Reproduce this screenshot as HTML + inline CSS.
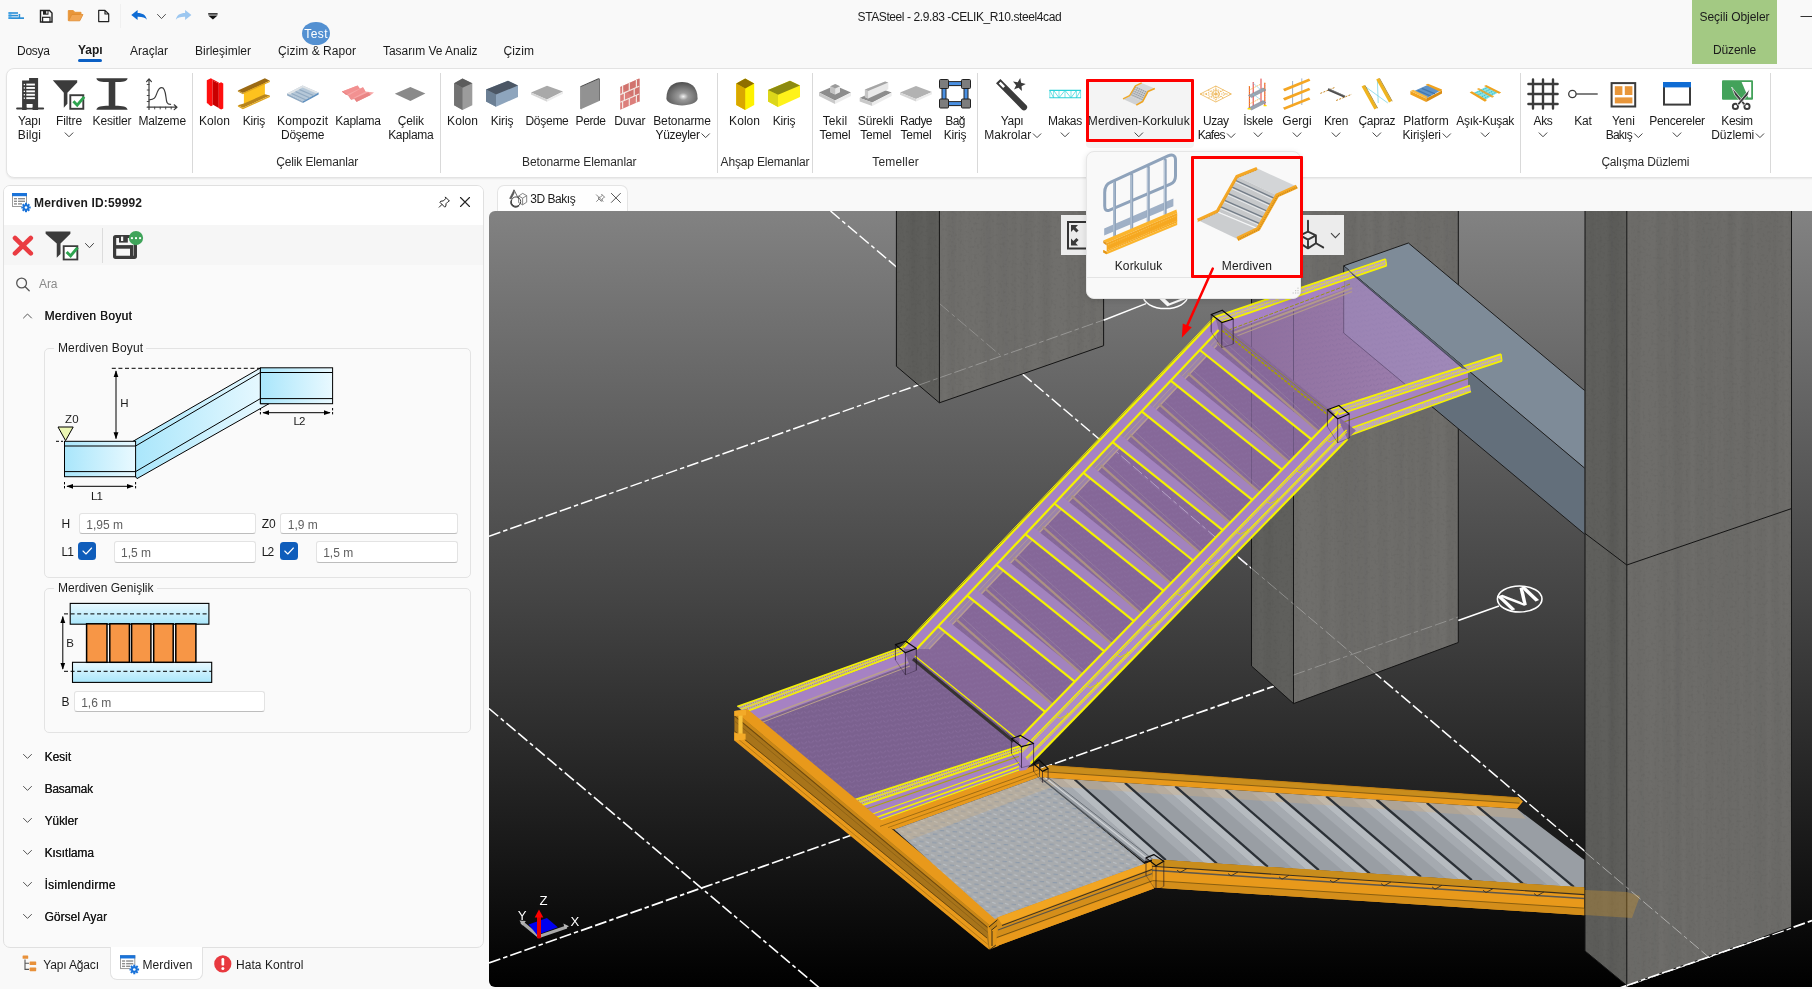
<!DOCTYPE html>
<html lang="tr"><head><meta charset="utf-8"><title>STASteel</title><style>html,body{margin:0;padding:0}body{width:1812px;height:989px;overflow:hidden;background:#f9f9f9;position:relative;font-family:"Liberation Sans",sans-serif;}
.t{position:absolute;white-space:nowrap;font-family:"Liberation Sans",sans-serif;}
#root{position:absolute;left:0;top:0;width:1812px;height:989px;will-change:transform;}
.b{position:absolute;display:block;}
svg{overflow:visible}</style></head><body><div id="root">
<div class="t" style="left:857.60px;top:11.10px;font-size:12px;line-height:12px;color:#1b1b1b;letter-spacing:-0.411px;">STASteel - 2.9.83 -CELIK_R10.steel4cad</div>
<div class="b" style="left:1692px;top:0px;width:85px;height:64px;background:#a3c983;"></div>
<div class="t" style="left:1699.53px;top:11.10px;font-size:12px;line-height:12px;color:#1b1b1b;letter-spacing:-0.053px;">Seçili Objeler</div>
<div class="t" style="left:1713.09px;top:44.10px;font-size:12px;line-height:12px;color:#1b1b1b;letter-spacing:-0.171px;">Düzenle</div>
<div class="t" style="left:17.00px;top:45.10px;font-size:12px;line-height:12px;color:#1b1b1b;letter-spacing:-0.253px;">Dosya</div>
<div class="t" style="left:78.00px;top:44.10px;font-size:12px;line-height:12px;color:#1b1b1b;font-weight:bold;letter-spacing:-0.060px;">Yapı</div>
<div class="t" style="left:130.00px;top:45.10px;font-size:12px;line-height:12px;color:#1b1b1b;letter-spacing:-0.001px;">Araçlar</div>
<div class="t" style="left:195.00px;top:45.10px;font-size:12px;line-height:12px;color:#1b1b1b;">Birleşimler</div>
<div class="t" style="left:278.00px;top:45.10px;font-size:12px;line-height:12px;color:#1b1b1b;letter-spacing:0.054px;">Çizim &amp; Rapor</div>
<div class="t" style="left:383.00px;top:45.10px;font-size:12px;line-height:12px;color:#1b1b1b;letter-spacing:-0.055px;">Tasarım Ve Analiz</div>
<div class="t" style="left:503.50px;top:45.10px;font-size:12px;line-height:12px;color:#1b1b1b;letter-spacing:0.126px;">Çizim</div>
<div class="b" style="left:78px;top:59px;width:24px;height:2.6px;background:#0a5fc4;border-radius:1.5px;"></div>
<div class="b" style="left:302px;top:21.6px;width:28.2px;height:23.5px;background:#5390d1;border-radius:50%;"></div>
<div class="t" style="left:304.23px;top:28.10px;font-size:12px;line-height:12px;color:#fff;letter-spacing:0.431px;">Test</div>
<div class="b" style="left:5.6px;top:67.8px;width:1830px;height:108.2px;background:#ffffff;border:1px solid #e3e3e3;border-radius:8px;box-shadow:0 1px 2px rgba(0,0,0,.07);"></div>
<div class="b" style="left:1086px;top:79px;width:108px;height:69px;background:#f4f4f4;border-radius:4px;"></div>
<div class="b" style="left:191.8px;top:72.5px;width:1px;height:100.5px;background:#d9d9d9;"></div>
<div class="b" style="left:440.1px;top:72.5px;width:1px;height:100.5px;background:#d9d9d9;"></div>
<div class="b" style="left:716.9px;top:72.5px;width:1px;height:100.5px;background:#d9d9d9;"></div>
<div class="b" style="left:811.9px;top:72.5px;width:1px;height:100.5px;background:#d9d9d9;"></div>
<div class="b" style="left:977.1px;top:72.5px;width:1px;height:100.5px;background:#d9d9d9;"></div>
<div class="b" style="left:1520.1px;top:72.5px;width:1px;height:100.5px;background:#d9d9d9;"></div>
<div class="b" style="left:1770.2px;top:72.5px;width:1px;height:100.5px;background:#d9d9d9;"></div>
<div class="t" style="left:18.03px;top:115.10px;font-size:12px;line-height:12px;color:#1b1b1b;letter-spacing:-0.265px;">Yapı</div>
<div class="t" style="left:17.86px;top:129.10px;font-size:12px;line-height:12px;color:#1b1b1b;letter-spacing:0.081px;">Bilgi</div>
<div class="t" style="left:55.89px;top:115.10px;font-size:12px;line-height:12px;color:#1b1b1b;letter-spacing:-0.073px;">Filtre</div>
<div class="t" style="left:92.57px;top:115.10px;font-size:12px;line-height:12px;color:#1b1b1b;letter-spacing:-0.145px;">Kesitler</div>
<div class="t" style="left:138.43px;top:115.10px;font-size:12px;line-height:12px;color:#1b1b1b;letter-spacing:-0.163px;">Malzeme</div>
<div class="t" style="left:198.96px;top:115.10px;font-size:12px;line-height:12px;color:#1b1b1b;letter-spacing:0.077px;">Kolon</div>
<div class="t" style="left:242.69px;top:115.10px;font-size:12px;line-height:12px;color:#1b1b1b;letter-spacing:-0.183px;">Kiriş</div>
<div class="t" style="left:277.03px;top:115.10px;font-size:12px;line-height:12px;color:#1b1b1b;letter-spacing:0.140px;">Kompozit</div>
<div class="t" style="left:280.97px;top:129.10px;font-size:12px;line-height:12px;color:#1b1b1b;letter-spacing:-0.236px;">Döşeme</div>
<div class="t" style="left:335.35px;top:115.10px;font-size:12px;line-height:12px;color:#1b1b1b;letter-spacing:-0.293px;">Kaplama</div>
<div class="t" style="left:397.63px;top:115.10px;font-size:12px;line-height:12px;color:#1b1b1b;letter-spacing:-0.068px;">Çelik</div>
<div class="t" style="left:388.15px;top:129.10px;font-size:12px;line-height:12px;color:#1b1b1b;letter-spacing:-0.293px;">Kaplama</div>
<div class="t" style="left:447.06px;top:115.10px;font-size:12px;line-height:12px;color:#1b1b1b;letter-spacing:0.077px;">Kolon</div>
<div class="t" style="left:490.79px;top:115.10px;font-size:12px;line-height:12px;color:#1b1b1b;letter-spacing:-0.183px;">Kiriş</div>
<div class="t" style="left:525.49px;top:115.10px;font-size:12px;line-height:12px;color:#1b1b1b;letter-spacing:-0.276px;">Döşeme</div>
<div class="t" style="left:575.60px;top:115.10px;font-size:12px;line-height:12px;color:#1b1b1b;letter-spacing:-0.405px;">Perde</div>
<div class="t" style="left:614.30px;top:115.10px;font-size:12px;line-height:12px;color:#1b1b1b;letter-spacing:-0.202px;">Duvar</div>
<div class="t" style="left:653.21px;top:115.10px;font-size:12px;line-height:12px;color:#1b1b1b;letter-spacing:-0.124px;">Betonarme</div>
<div class="t" style="left:655.55px;top:129.10px;font-size:12px;line-height:12px;color:#1b1b1b;letter-spacing:-0.327px;">Yüzeyler</div>
<div class="t" style="left:729.06px;top:115.10px;font-size:12px;line-height:12px;color:#1b1b1b;letter-spacing:0.077px;">Kolon</div>
<div class="t" style="left:772.79px;top:115.10px;font-size:12px;line-height:12px;color:#1b1b1b;letter-spacing:-0.183px;">Kiriş</div>
<div class="t" style="left:822.69px;top:115.10px;font-size:12px;line-height:12px;color:#1b1b1b;letter-spacing:0.124px;">Tekil</div>
<div class="t" style="left:819.44px;top:129.10px;font-size:12px;line-height:12px;color:#1b1b1b;letter-spacing:-0.177px;">Temel</div>
<div class="t" style="left:857.76px;top:115.10px;font-size:12px;line-height:12px;color:#1b1b1b;letter-spacing:-0.113px;">Sürekli</div>
<div class="t" style="left:860.14px;top:129.10px;font-size:12px;line-height:12px;color:#1b1b1b;letter-spacing:-0.177px;">Temel</div>
<div class="t" style="left:900.02px;top:115.10px;font-size:12px;line-height:12px;color:#1b1b1b;letter-spacing:-0.546px;">Radye</div>
<div class="t" style="left:900.44px;top:129.10px;font-size:12px;line-height:12px;color:#1b1b1b;letter-spacing:-0.177px;">Temel</div>
<div class="t" style="left:945.34px;top:115.10px;font-size:12px;line-height:12px;color:#1b1b1b;letter-spacing:-0.675px;">Bağ</div>
<div class="t" style="left:943.79px;top:129.10px;font-size:12px;line-height:12px;color:#1b1b1b;letter-spacing:-0.183px;">Kiriş</div>
<div class="t" style="left:1000.63px;top:115.10px;font-size:12px;line-height:12px;color:#1b1b1b;letter-spacing:-0.265px;">Yapı</div>
<div class="t" style="left:984.15px;top:129.10px;font-size:12px;line-height:12px;color:#1b1b1b;letter-spacing:0.075px;">Makrolar</div>
<div class="t" style="left:1048.04px;top:115.10px;font-size:12px;line-height:12px;color:#1b1b1b;letter-spacing:-0.285px;">Makas</div>
<div class="t" style="left:1087.84px;top:115.10px;font-size:12px;line-height:12px;color:#1b1b1b;letter-spacing:0.111px;">Merdiven-Korkuluk</div>
<div class="t" style="left:1203.02px;top:115.10px;font-size:12px;line-height:12px;color:#1b1b1b;letter-spacing:-0.446px;">Uzay</div>
<div class="t" style="left:1197.70px;top:129.10px;font-size:12px;line-height:12px;color:#1b1b1b;letter-spacing:-0.746px;">Kafes</div>
<div class="t" style="left:1243.25px;top:115.10px;font-size:12px;line-height:12px;color:#1b1b1b;letter-spacing:-0.309px;">İskele</div>
<div class="t" style="left:1282.36px;top:115.10px;font-size:12px;line-height:12px;color:#1b1b1b;letter-spacing:-0.010px;">Gergi</div>
<div class="t" style="left:1323.89px;top:115.10px;font-size:12px;line-height:12px;color:#1b1b1b;letter-spacing:-0.282px;">Kren</div>
<div class="t" style="left:1358.47px;top:115.10px;font-size:12px;line-height:12px;color:#1b1b1b;letter-spacing:-0.336px;">Çapraz</div>
<div class="t" style="left:1403.19px;top:115.10px;font-size:12px;line-height:12px;color:#1b1b1b;letter-spacing:0.118px;">Platform</div>
<div class="t" style="left:1402.45px;top:129.10px;font-size:12px;line-height:12px;color:#1b1b1b;letter-spacing:-0.092px;">Kirişleri</div>
<div class="t" style="left:1456.35px;top:115.10px;font-size:12px;line-height:12px;color:#1b1b1b;letter-spacing:-0.298px;">Aşık-Kuşak</div>
<div class="t" style="left:1533.38px;top:115.10px;font-size:12px;line-height:12px;color:#1b1b1b;letter-spacing:-0.252px;">Aks</div>
<div class="t" style="left:1574.15px;top:115.10px;font-size:12px;line-height:12px;color:#1b1b1b;letter-spacing:-0.106px;">Kat</div>
<div class="t" style="left:1611.89px;top:115.10px;font-size:12px;line-height:12px;color:#1b1b1b;letter-spacing:0.028px;">Yeni</div>
<div class="t" style="left:1605.65px;top:129.10px;font-size:12px;line-height:12px;color:#1b1b1b;letter-spacing:-0.753px;">Bakış</div>
<div class="t" style="left:1649.17px;top:115.10px;font-size:12px;line-height:12px;color:#1b1b1b;letter-spacing:-0.236px;">Pencereler</div>
<div class="t" style="left:1721.35px;top:115.10px;font-size:12px;line-height:12px;color:#1b1b1b;letter-spacing:-0.410px;">Kesim</div>
<div class="t" style="left:1711.25px;top:129.10px;font-size:12px;line-height:12px;color:#1b1b1b;letter-spacing:-0.057px;">Düzlemi</div>
<div class="t" style="left:276.27px;top:156.10px;font-size:12px;line-height:12px;color:#2b2b2b;letter-spacing:-0.145px;">Çelik Elemanlar</div>
<div class="t" style="left:522.09px;top:156.10px;font-size:12px;line-height:12px;color:#2b2b2b;letter-spacing:-0.086px;">Betonarme Elemanlar</div>
<div class="t" style="left:720.58px;top:156.10px;font-size:12px;line-height:12px;color:#2b2b2b;letter-spacing:-0.170px;">Ahşap Elemanlar</div>
<div class="t" style="left:872.27px;top:156.10px;font-size:12px;line-height:12px;color:#2b2b2b;letter-spacing:0.165px;">Temeller</div>
<div class="t" style="left:1601.40px;top:156.10px;font-size:12px;line-height:12px;color:#2b2b2b;letter-spacing:-0.192px;">Çalışma Düzlemi</div>
<div class="b" style="left:3px;top:185px;width:481px;height:763px;background:#fafafa;border:1px solid #e0e0e0;border-radius:7px;box-sizing:border-box;overflow:hidden;"></div>
<div class="b" style="left:4px;top:186px;width:479px;height:39px;background:#ffffff;border-radius:6px 6px 0 0;"></div>
<div class="b" style="left:4px;top:225px;width:479px;height:40px;background:#f6f6f6;"></div>
<div class="t" style="left:34.00px;top:197.10px;font-size:12px;line-height:12px;color:#1b1b1b;font-weight:bold;letter-spacing:0.164px;">Merdiven ID:59992</div>
<div class="b" style="left:102px;top:228px;width:1px;height:35px;background:#dcdcdc;"></div>
<div class="t" style="left:39.00px;top:278.10px;font-size:12px;line-height:12px;color:#8a8a8a;letter-spacing:-0.087px;">Ara</div>
<div class="t" style="left:44.40px;top:310.10px;font-size:12px;line-height:12px;color:#1b1b1b;letter-spacing:0.318px;text-shadow:0.25px 0 0 #1b1b1b;">Merdiven Boyut</div>
<div class="t" style="left:44.40px;top:751.10px;font-size:12px;line-height:12px;color:#1b1b1b;letter-spacing:-0.019px;text-shadow:0.25px 0 0 #1b1b1b;">Kesit</div>
<div class="t" style="left:44.40px;top:783.10px;font-size:12px;line-height:12px;color:#1b1b1b;letter-spacing:-0.237px;text-shadow:0.25px 0 0 #1b1b1b;">Basamak</div>
<div class="t" style="left:44.40px;top:815.10px;font-size:12px;line-height:12px;color:#1b1b1b;letter-spacing:-0.083px;text-shadow:0.25px 0 0 #1b1b1b;">Yükler</div>
<div class="t" style="left:44.40px;top:847.10px;font-size:12px;line-height:12px;color:#1b1b1b;letter-spacing:-0.052px;text-shadow:0.25px 0 0 #1b1b1b;">Kısıtlama</div>
<div class="t" style="left:44.40px;top:879.10px;font-size:12px;line-height:12px;color:#1b1b1b;letter-spacing:0.272px;text-shadow:0.25px 0 0 #1b1b1b;">İsimlendirme</div>
<div class="t" style="left:44.40px;top:911.10px;font-size:12px;line-height:12px;color:#1b1b1b;letter-spacing:0.013px;text-shadow:0.25px 0 0 #1b1b1b;">Görsel Ayar</div>
<div class="b" style="left:44px;top:347.5px;width:427px;height:230px;border:1px solid #e3e3e3;border-radius:5px;box-sizing:border-box;"></div>
<div class="b" style="left:54px;top:341px;width:92px;height:13px;background:#fafafa;"></div>
<div class="t" style="left:58.00px;top:342.10px;font-size:12px;line-height:12px;color:#1b1b1b;letter-spacing:0.126px;">Merdiven Boyut</div>
<div class="b" style="left:44px;top:587.5px;width:427px;height:145px;border:1px solid #e3e3e3;border-radius:5px;box-sizing:border-box;"></div>
<div class="b" style="left:54px;top:581px;width:103px;height:13px;background:#fafafa;"></div>
<div class="t" style="left:58.00px;top:582.10px;font-size:12px;line-height:12px;color:#1b1b1b;letter-spacing:0.009px;">Merdiven Genişlik</div>
<div class="t" style="left:61.40px;top:518.10px;font-size:12px;line-height:12px;color:#1b1b1b;">H</div>
<div class="b" style="left:78.7px;top:512.7px;width:177.7px;height:21.8px;background:#fff;border:1px solid #e3e3e3;border-bottom-color:#bdbdbd;border-radius:3px;box-sizing:border-box;"></div><div class="t" style="left:86.30px;top:519.10px;font-size:12px;line-height:12px;color:#5f5f5f;">1,95 m</div>
<div class="t" style="left:261.80px;top:518.10px;font-size:12px;line-height:12px;color:#1b1b1b;letter-spacing:-0.002px;">Z0</div>
<div class="b" style="left:280.2px;top:512.7px;width:178.3px;height:21.8px;background:#fff;border:1px solid #e3e3e3;border-bottom-color:#bdbdbd;border-radius:3px;box-sizing:border-box;"></div><div class="t" style="left:287.80px;top:519.10px;font-size:12px;line-height:12px;color:#5f5f5f;">1,9 m</div>
<div class="t" style="left:61.40px;top:546.10px;font-size:12px;line-height:12px;color:#1b1b1b;letter-spacing:-0.846px;">L1</div>
<div class="b" style="left:113.5px;top:541px;width:142.9px;height:21.6px;background:#fff;border:1px solid #e3e3e3;border-bottom-color:#bdbdbd;border-radius:3px;box-sizing:border-box;"></div><div class="t" style="left:121.10px;top:547.10px;font-size:12px;line-height:12px;color:#5f5f5f;">1,5 m</div>
<div class="t" style="left:261.80px;top:546.10px;font-size:12px;line-height:12px;color:#1b1b1b;letter-spacing:-0.846px;">L2</div>
<div class="b" style="left:315.6px;top:541px;width:142.9px;height:21.6px;background:#fff;border:1px solid #e3e3e3;border-bottom-color:#bdbdbd;border-radius:3px;box-sizing:border-box;"></div><div class="t" style="left:323.20px;top:547.10px;font-size:12px;line-height:12px;color:#5f5f5f;">1,5 m</div>
<div class="b" style="left:78.4px;top:542px;width:17.6px;height:17.6px;background:#0f5dbb;border-radius:3.5px;"></div>
<div class="b" style="left:280.2px;top:542px;width:17.6px;height:17.6px;background:#0f5dbb;border-radius:3.5px;"></div>
<div class="t" style="left:61.40px;top:696.10px;font-size:12px;line-height:12px;color:#1b1b1b;">B</div>
<div class="b" style="left:73.6px;top:690.9px;width:191.9px;height:21.5px;background:#fff;border:1px solid #e3e3e3;border-bottom-color:#bdbdbd;border-radius:3px;box-sizing:border-box;"></div><div class="t" style="left:81.20px;top:697.10px;font-size:12px;line-height:12px;color:#5f5f5f;">1,6 m</div>
<div class="t" style="left:120.30px;top:397.51px;font-size:11.5px;line-height:11.5px;color:#1b1b1b;">H</div>
<div class="t" style="left:65.00px;top:413.51px;font-size:11.5px;line-height:11.5px;color:#1b1b1b;letter-spacing:0.181px;">Z0</div>
<div class="t" style="left:91.00px;top:491.01px;font-size:11.5px;line-height:11.5px;color:#1b1b1b;letter-spacing:-0.790px;">L1</div>
<div class="t" style="left:293.50px;top:415.51px;font-size:11.5px;line-height:11.5px;color:#1b1b1b;letter-spacing:-0.790px;">L2</div>
<div class="t" style="left:66.20px;top:637.51px;font-size:11.5px;line-height:11.5px;color:#1b1b1b;">B</div>
<div class="b" style="left:109.5px;top:947px;width:93px;height:32.5px;background:#fff;border:1px solid #e2e2e2;border-top:none;border-radius:0 0 7px 7px;box-sizing:border-box;"></div>
<div class="t" style="left:43.30px;top:959.10px;font-size:12px;line-height:12px;color:#1b1b1b;letter-spacing:-0.161px;">Yapı Ağacı</div>
<div class="t" style="left:142.50px;top:959.10px;font-size:12px;line-height:12px;color:#1b1b1b;letter-spacing:0.093px;">Merdiven</div>
<div class="t" style="left:236.00px;top:959.10px;font-size:12px;line-height:12px;color:#1b1b1b;letter-spacing:0.055px;">Hata Kontrol</div>
<div class="b" style="left:496.8px;top:184.8px;width:131px;height:28px;background:#fefefe;border:1px solid #e4e4e4;border-bottom:none;border-radius:7px 7px 0 0;box-sizing:border-box;"></div>
<div class="t" style="left:530.30px;top:193.10px;font-size:12px;line-height:12px;color:#1b1b1b;letter-spacing:-0.469px;">3D Bakış</div>
<svg class="b" style="left:489px;top:211px" width="1323" height="778" viewBox="489 211 1323 778"><defs>
    <linearGradient id="bgg" x1="0" x2="0" y1="0" y2="1"><stop offset="0" stop-color="#828282"/><stop offset="0.5" stop-color="#444444"/><stop offset="1" stop-color="#000000"/></linearGradient>
    <filter id="conc" x="0" y="0" width="100%" height="100%"><feTurbulence type="fractalNoise" baseFrequency="0.11 0.0012" numOctaves="2" seed="7" result="n"/><feColorMatrix in="n" type="matrix" values="0 0 0 0 0  0 0 0 0 0  0 0 0 0 0  1.1 0.6 0 0 -0.62" result="a"/><feComposite in="a" in2="SourceAlpha" operator="in"/></filter>
    <filter id="conc2" x="0" y="0" width="100%" height="100%"><feTurbulence type="fractalNoise" baseFrequency="0.35 0.35" numOctaves="2" seed="3" result="n"/><feColorMatrix in="n" type="matrix" values="0 0 0 0 0  0 0 0 0 0  0 0 0 0 0  1.2 0 0 0 -0.62" result="a"/><feComposite in="a" in2="SourceAlpha" operator="in"/></filter>
    <pattern id="plate" width="13" height="8.4" patternUnits="userSpaceOnUse" patternTransform="rotate(5)"><path d="M1 2 h4.6 M7.5 6.2 h4.6" stroke="#8f9cab" stroke-width="1.1" fill="none"/><path d="M7.5 1.6 l3.6 1.2 M1 5.8 l3.6 1.2" stroke="#bcc1c6" stroke-width="1" fill="none"/></pattern>
    <pattern id="platep" width="7" height="5" patternUnits="userSpaceOnUse" patternTransform="rotate(-8)"><path d="M0.5 3.4 L3 1.6 M4 1.4 L6.5 3.6" stroke="#8a6f9f" stroke-width=".8" fill="none"/></pattern>
    <pattern id="hatch" width="2.4" height="2.4" patternUnits="userSpaceOnUse"><rect width="2.4" height="2.4" fill="#b9a0cf"/><rect x="0" y="0" width="1.2" height="1.2" fill="#d9d24a"/></pattern><clipPath id="vclip"><path d="M495 211 H1812 V987 H495 a6 6 0 0 1 -6 -6 V217 a6 6 0 0 1 6 -6z"/></clipPath>
    </defs><g clip-path="url(#vclip)"><rect x="489" y="211" width="1323" height="776" fill="url(#bgg)"/><line x1="489.0" y1="536.2" x2="925.0" y2="382.6" stroke="#ffffff" stroke-width="1.5" stroke-dasharray="12 3 4.5 3 12 3"/><line x1="489.0" y1="963.0" x2="1300.0" y2="677.0" stroke="#ffffff" stroke-width="1.7" stroke-dasharray="12 3 4.5 3 12 3"/><line x1="1560.0" y1="1009.0" x2="1812.0" y2="920.6" stroke="#ffffff" stroke-width="1.8" stroke-dasharray="12 3 4.5 3 12 3"/><line x1="830.5" y1="211.0" x2="1710.0" y2="957.5" stroke="#ffffff" stroke-width="1.5" stroke-dasharray="12 3.4 4 3.4 12 3.4"/><line x1="489.0" y1="708.5" x2="822.0" y2="990.0" stroke="#ffffff" stroke-width="1.6" stroke-dasharray="12 3.4 4 3.4 12 3.4"/><polygon points="896.4,205.0 939.4,205.0 939.4,402.8 896.4,366.3" fill="#5f5f5c" /><polygon points="939.4,205.0 1103.6,205.0 1103.6,345.7 939.4,402.8" fill="#706f6c" /><polygon points="896.4,205.0 939.4,205.0 939.4,402.8 896.4,366.3" fill="#000" opacity="0.085" filter="url(#conc)"/><polygon points="939.4,205.0 1103.6,205.0 1103.6,345.7 939.4,402.8" fill="#000" opacity="0.08" filter="url(#conc)"/><polygon points="896.4,205.0 1103.6,205.0 1103.6,345.7 939.4,402.8 896.4,366.3" fill="#000" opacity="0.1" filter="url(#conc2)"/><path d="M896.4 205 V366.3 L939.4 402.8 L1103.6 345.7 V205 M939.4 205 V402.8" fill="none" stroke="#141414" stroke-width="1"/><line x1="919.0" y1="385.0" x2="1103.6" y2="320.0" stroke="#ffffff" stroke-width="1" stroke-dasharray="12 3 4.5 3 12 3" opacity="0.28"/><line x1="830.5" y1="211.0" x2="1099.0" y2="439.0" stroke="#ffffff" stroke-width="1" stroke-dasharray="12 3.4 4 3.4 12 3.4" opacity="0.0"/><line x1="940.0" y1="304.0" x2="1000.0" y2="355.0" stroke="#ffffff" stroke-width="1" stroke-dasharray="12 3.4 4 3.4 12 3.4" opacity="0.22"/><line x1="1103.6" y1="320.2" x2="1146.0" y2="303.6" stroke="#ffffff" stroke-width="1.5"/><ellipse cx="1165.4" cy="295.6" rx="22.4" ry="13" fill="none" stroke="#fff" stroke-width="1.5"/><text x="0" y="0" transform="matrix(2.03,-0.778,1.06,1.0,1164.1,307.4)" font-family="Liberation Sans, sans-serif" font-size="20" fill="#fff">L</text><polygon points="1251.5,205.0 1293.5,205.0 1293.5,703.6 1251.5,666.0" fill="#5f5f5c" /><polygon points="1293.5,205.0 1458.3,205.0 1458.3,642.5 1293.5,703.6" fill="#6f6e6b" /><polygon points="1251.5,205.0 1293.5,205.0 1293.5,703.6 1251.5,666.0" fill="#000" opacity="0.085" filter="url(#conc)"/><polygon points="1293.5,205.0 1458.3,205.0 1458.3,642.5 1293.5,703.6" fill="#000" opacity="0.08" filter="url(#conc)"/><polygon points="1251.5,205.0 1458.3,205.0 1458.3,642.5 1293.5,703.6 1251.5,666.0" fill="#000" opacity="0.1" filter="url(#conc2)"/><path d="M1251.5 205 V666 L1293.5 703.6 L1458.3 642.5 V205 M1293.5 205 V703.6" fill="none" stroke="#141414" stroke-width="1"/><line x1="1293.5" y1="675.0" x2="1458.3" y2="617.0" stroke="#ffffff" stroke-width="1" stroke-dasharray="12 3 4.5 3 12 3" opacity="0.25"/><line x1="1250.0" y1="567.0" x2="1376.0" y2="674.0" stroke="#ffffff" stroke-width="1" stroke-dasharray="12 3.4 4 3.4 12 3.4" opacity="0.3"/><line x1="1458.3" y1="620.6" x2="1499.0" y2="606.0" stroke="#ffffff" stroke-width="1.6"/><ellipse cx="1519.7" cy="599" rx="22.3" ry="13" fill="none" stroke="#fff" stroke-width="1.6"/><text x="0" y="0" transform="matrix(2.03,-0.778,1.06,1.0,1508.4,611.8)" font-family="Liberation Sans, sans-serif" font-size="20" fill="#fff">M</text><polygon points="1343.7,265.8 1408.4,243.0 1584.5,390.4 1584.5,468.0" fill="#7e8b98" /><polygon points="1343.7,265.8 1584.5,468.0 1584.5,534.0 1458.6,429.0 1343.7,333.0" fill="#636f7b" /><path d="M1343.7 265.8 L1408.4 243 L1584.5 390.4 M1343.7 265.8 L1584.5 468 M1343.7 333 L1584.5 534 M1343.7 265.8 V333" fill="none" stroke="#1c1c1c" stroke-width="1"/><linearGradient id="lpg" gradientUnits="userSpaceOnUse" x1="1240" y1="0" x2="1465" y2="0"><stop offset="0" stop-color="#8f6f9f"/><stop offset="1" stop-color="#a283b4"/></linearGradient><polygon points="1215.5,318.0 1351.8,273.9 1462.5,368.2 1347.0,424.5" fill="url(#lpg)" opacity="0.97" /><polygon points="1215.5,318.0 1351.8,273.9 1462.5,368.2 1347.0,424.5" fill="url(#platep)" /><clipPath id="ulclip"><polygon points="1215.5,318.0 1351.8,273.9 1462.5,368.2 1347.0,424.5"/></clipPath><g clip-path="url(#ulclip)"><polygon points="1343.7,265.8 1470.0,372.0 1470.0,438.6 1458.6,429.0 1343.7,333.0" fill="#a08fc0" opacity="0.5" /><path d="M1343.7 274 V333 L1458.6 429" fill="none" stroke="#4a3d5e" stroke-width="1" opacity=".55"/></g><line x1="1293.5" y1="300.0" x2="1293.5" y2="392.0" stroke="#5b4a70" stroke-width="1" opacity="0.7"/><line x1="1251.5" y1="306.0" x2="1251.5" y2="352.0" stroke="#5b4a70" stroke-width="1" opacity="0.5"/><polygon points="1217.0,324.2 1344.0,280.6 1344.0,289.6 1221.0,334.2" fill="#a682c3" /><polygon points="1213.0,317.6 1385.6,259.0 1386.6,265.6 1216.0,324.2" fill="url(#hatch)" /><line x1="1213.0" y1="317.6" x2="1385.6" y2="259.0" stroke="#f4f200" stroke-width="1.8"/><line x1="1216.0" y1="324.2" x2="1386.6" y2="265.6" stroke="#f4f200" stroke-width="1.8"/><line x1="1214.5" y1="320.9" x2="1386.1" y2="262.3" stroke="#f4f200" stroke-width="0.8" opacity="0.8"/><line x1="1385.6" y1="259.0" x2="1386.6" y2="265.6" stroke="#f4f200" stroke-width="1.2"/><line x1="1223.0" y1="332.2" x2="1350.0" y2="284.1" stroke="#9a9410" stroke-width="1" stroke-dasharray="4 1.5"/><line x1="1225.0" y1="336.2" x2="1352.0" y2="288.1" stroke="#b39a8a" stroke-width="2"/><line x1="1227.0" y1="339.7" x2="1352.0" y2="291.6" stroke="#b39a8a" stroke-width="1.2"/><polygon points="1335.0,416.0 1468.0,371.4 1468.0,391.0 1343.0,437.0" fill="#a682c3" /><polygon points="1331.0,409.4 1501.0,354.2 1502.0,360.8 1334.0,416.0" fill="url(#hatch)" /><line x1="1331.0" y1="409.4" x2="1501.0" y2="354.2" stroke="#f4f200" stroke-width="1.8"/><line x1="1334.0" y1="416.0" x2="1502.0" y2="360.8" stroke="#f4f200" stroke-width="1.8"/><line x1="1332.5" y1="412.7" x2="1501.5" y2="357.5" stroke="#f4f200" stroke-width="0.8" opacity="0.8"/><line x1="1501.0" y1="354.2" x2="1502.0" y2="360.8" stroke="#f4f200" stroke-width="1.2"/><line x1="1341.0" y1="423.0" x2="1468.0" y2="378.4" stroke="#9a9410" stroke-width="1.2"/><polygon points="1343.0,431.0 1470.0,385.4 1471.0,391.4 1345.0,437.0" fill="url(#hatch)" /><line x1="1343.0" y1="431.0" x2="1470.0" y2="385.4" stroke="#f4f200" stroke-width="1.6"/><line x1="1345.0" y1="437.0" x2="1471.0" y2="391.4" stroke="#f4f200" stroke-width="1.6"/><polygon points="1343.7,265.8 1351.8,273.9 1462.5,368.2 1468.0,370.0" fill="#59636e" /><line x1="1351.8" y1="273.9" x2="1462.5" y2="368.2" stroke="#3c3050" stroke-width="1" opacity="0.6"/><polygon points="1215.5,318.0 1355.9,430.4 1036.9,756.9 902.0,649.0" fill="#87689b" opacity="0.97" /><polygon points="1215.5,318.0 1355.9,430.4 1036.9,756.9 902.0,649.0" fill="url(#platep)" /><line x1="1293.5" y1="392.0" x2="1293.5" y2="455.0" stroke="#5b4a70" stroke-width="1" opacity="0.55"/><line x1="1251.5" y1="352.0" x2="1251.5" y2="500.0" stroke="#5b4a70" stroke-width="1" opacity="0.45"/><line x1="1104.0" y1="441.0" x2="1250.0" y2="567.0" stroke="#e0d8ee" stroke-width="1" stroke-dasharray="12 3.4 4 3.4 12 3.4" opacity="0.5"/><polygon points="1216.8,332.0 1217.0,345.0 929.1,649.0 916.6,649.0" fill="#9d86ad" opacity="0.9" /><line x1="1217.0" y1="345.0" x2="929.1" y2="649.0" stroke="#b89c92" stroke-width="1.4"/><line x1="1216.3" y1="340.0" x2="923.6" y2="649.0" stroke="#b89c92" stroke-width="1" opacity="0.8"/><polygon points="1199.8,350.0 1311.5,439.3 1318.8,431.8 1207.0,342.4" fill="#a283be" /><line x1="1217.0" y1="342.4" x2="1318.8" y2="431.8" stroke="#ab9184" stroke-width="2.2"/><line x1="1222.1" y1="339.6" x2="1321.5" y2="429.1" stroke="#a08ca4" stroke-width="1" opacity="0.5"/><line x1="1199.8" y1="350.0" x2="1311.5" y2="439.3" stroke="#f4f200" stroke-width="2.2"/><polygon points="1170.7,380.7 1281.9,469.6 1289.2,462.1 1177.9,373.1" fill="#a283be" /><line x1="1187.9" y1="373.1" x2="1289.2" y2="462.1" stroke="#ab9184" stroke-width="2.2"/><line x1="1193.1" y1="370.3" x2="1291.9" y2="459.4" stroke="#a08ca4" stroke-width="1" opacity="0.5"/><line x1="1170.7" y1="380.7" x2="1281.9" y2="469.6" stroke="#f4f200" stroke-width="2.2"/><polygon points="1141.6,411.4 1252.3,499.9 1259.6,492.4 1148.8,403.8" fill="#a283be" /><line x1="1158.8" y1="403.8" x2="1259.6" y2="492.4" stroke="#ab9184" stroke-width="2.2"/><line x1="1164.0" y1="401.0" x2="1262.3" y2="489.7" stroke="#a08ca4" stroke-width="1" opacity="0.5"/><line x1="1141.6" y1="411.4" x2="1252.3" y2="499.9" stroke="#f4f200" stroke-width="2.2"/><polygon points="1112.6,442.1 1222.7,530.2 1230.0,522.7 1119.8,434.5" fill="#a283be" /><line x1="1129.8" y1="434.5" x2="1230.0" y2="522.7" stroke="#ab9184" stroke-width="2.2"/><line x1="1134.9" y1="431.7" x2="1232.7" y2="519.9" stroke="#a08ca4" stroke-width="1" opacity="0.5"/><line x1="1112.6" y1="442.1" x2="1222.7" y2="530.2" stroke="#f4f200" stroke-width="2.2"/><polygon points="1083.5,472.8 1193.1,560.5 1200.4,553.0 1090.7,465.2" fill="#a283be" /><line x1="1100.7" y1="465.2" x2="1200.4" y2="553.0" stroke="#ab9184" stroke-width="2.2"/><line x1="1105.8" y1="462.4" x2="1203.1" y2="550.2" stroke="#a08ca4" stroke-width="1" opacity="0.5"/><line x1="1083.5" y1="472.8" x2="1193.1" y2="560.5" stroke="#f4f200" stroke-width="2.2"/><polygon points="1054.4,503.5 1163.5,590.8 1170.8,583.3 1061.6,495.9" fill="#a283be" /><line x1="1071.6" y1="495.9" x2="1170.8" y2="583.3" stroke="#ab9184" stroke-width="2.2"/><line x1="1076.8" y1="493.1" x2="1173.5" y2="580.5" stroke="#a08ca4" stroke-width="1" opacity="0.5"/><line x1="1054.4" y1="503.5" x2="1163.5" y2="590.8" stroke="#f4f200" stroke-width="2.2"/><polygon points="1025.3,534.2 1133.9,621.1 1141.2,613.6 1032.5,526.6" fill="#a283be" /><line x1="1042.5" y1="526.6" x2="1141.2" y2="613.6" stroke="#ab9184" stroke-width="2.2"/><line x1="1047.7" y1="523.8" x2="1143.9" y2="610.8" stroke="#a08ca4" stroke-width="1" opacity="0.5"/><line x1="1025.3" y1="534.2" x2="1133.9" y2="621.1" stroke="#f4f200" stroke-width="2.2"/><polygon points="996.3,564.9 1104.3,651.4 1111.7,643.9 1003.5,557.3" fill="#a283be" /><line x1="1013.5" y1="557.3" x2="1111.7" y2="643.9" stroke="#ab9184" stroke-width="2.2"/><line x1="1018.6" y1="554.5" x2="1114.4" y2="641.1" stroke="#a08ca4" stroke-width="1" opacity="0.5"/><line x1="996.3" y1="564.9" x2="1104.3" y2="651.4" stroke="#f4f200" stroke-width="2.2"/><polygon points="967.2,595.6 1074.7,681.6 1082.1,674.1 974.4,588.0" fill="#a283be" /><line x1="984.4" y1="588.0" x2="1082.1" y2="674.1" stroke="#ab9184" stroke-width="2.2"/><line x1="989.5" y1="585.2" x2="1084.8" y2="671.4" stroke="#a08ca4" stroke-width="1" opacity="0.5"/><line x1="967.2" y1="595.6" x2="1074.7" y2="681.6" stroke="#f4f200" stroke-width="2.2"/><polygon points="938.1,626.3 1045.1,711.9 1052.5,704.4 945.3,618.7" fill="#a283be" /><line x1="955.3" y1="618.7" x2="1052.5" y2="704.4" stroke="#ab9184" stroke-width="2.2"/><line x1="960.5" y1="615.9" x2="1055.2" y2="701.7" stroke="#a08ca4" stroke-width="1" opacity="0.5"/><line x1="938.1" y1="626.3" x2="1045.1" y2="711.9" stroke="#f4f200" stroke-width="2.2"/><line x1="1222.0" y1="330.6" x2="1328.0" y2="415.0" stroke="#a8a000" stroke-width="1.6" stroke-dasharray="3 1.2"/><line x1="1224.0" y1="328.6" x2="1330.0" y2="412.6" stroke="#8e8a20" stroke-width="1" opacity="0.8"/><polygon points="1215.5,318.0 1218.7,330.0 916.6,649.0 902.0,649.0" fill="#a682c3" /><line x1="1215.5" y1="318.0" x2="902.0" y2="649.0" stroke="#f4f200" stroke-width="2.2"/><line x1="1213.1" y1="318.0" x2="899.6" y2="649.0" stroke="#f4f200" stroke-width="0.9"/><line x1="1218.7" y1="330.0" x2="916.6" y2="649.0" stroke="#f4f200" stroke-width="2.2"/><polygon points="1338.2,412.0 1340.4,424.0 1017.9,754.0 1019.7,738.0" fill="#a682c3" /><polygon points="1340.4,424.0 1347.5,439.0 1029.0,765.0 1017.9,754.0" fill="#ad8cc9" /><line x1="1338.2" y1="412.0" x2="1019.7" y2="738.0" stroke="#f4f200" stroke-width="2.2"/><line x1="1340.4" y1="424.0" x2="1017.9" y2="754.0" stroke="#f4f200" stroke-width="1.5"/><line x1="1340.8" y1="426.0" x2="1018.4" y2="756.0" stroke="#f4f200" stroke-width="1"/><line x1="1346.6" y1="430.0" x2="1026.1" y2="758.0" stroke="#f4f200" stroke-width="1.4"/><line x1="1346.8" y1="432.0" x2="1026.4" y2="760.0" stroke="#f4f200" stroke-width="0.9"/><line x1="1347.5" y1="439.0" x2="1029.0" y2="765.0" stroke="#f4f200" stroke-width="2.2"/><path d="M1327.0 440.5 l3.5 1.6 l6.5-3.4 l0.6-2.2" fill="none" stroke="#d8d400" stroke-width="1"/><path d="M1297.0 471.2 l3.5 1.6 l6.5-3.4 l0.6-2.2" fill="none" stroke="#d8d400" stroke-width="1"/><path d="M1267.0 501.9 l3.5 1.6 l6.5-3.4 l0.6-2.2" fill="none" stroke="#d8d400" stroke-width="1"/><path d="M1237.0 532.6 l3.5 1.6 l6.5-3.4 l0.6-2.2" fill="none" stroke="#d8d400" stroke-width="1"/><path d="M1207.0 563.3 l3.5 1.6 l6.5-3.4 l0.6-2.2" fill="none" stroke="#d8d400" stroke-width="1"/><path d="M1177.0 594.0 l3.5 1.6 l6.5-3.4 l0.6-2.2" fill="none" stroke="#d8d400" stroke-width="1"/><path d="M1147.0 624.7 l3.5 1.6 l6.5-3.4 l0.6-2.2" fill="none" stroke="#d8d400" stroke-width="1"/><path d="M1117.0 655.4 l3.5 1.6 l6.5-3.4 l0.6-2.2" fill="none" stroke="#d8d400" stroke-width="1"/><path d="M1087.0 686.1 l3.5 1.6 l6.5-3.4 l0.6-2.2" fill="none" stroke="#d8d400" stroke-width="1"/><path d="M1057.0 716.8 l3.5 1.6 l6.5-3.4 l0.6-2.2" fill="none" stroke="#d8d400" stroke-width="1"/><polygon points="737.3,706.6 903.0,647.0 1021.6,745.5 854.5,801.0" fill="#7e6393" opacity="0.97" /><polygon points="737.3,706.6 903.0,647.0 1021.6,745.5 854.5,801.0" fill="url(#platep)" /><polygon points="737.3,706.6 903.0,647.0 905.0,653.0 745.3,712.6" fill="url(#hatch)" /><polygon points="745.3,712.6 905.0,653.0 909.0,664.0 759.3,720.6" fill="#a682c3" /><line x1="737.3" y1="706.6" x2="903.0" y2="647.0" stroke="#f4f200" stroke-width="1.6"/><line x1="740.7" y1="709.2" x2="903.0" y2="649.6" stroke="#f4f200" stroke-width="1"/><line x1="744.6" y1="712.2" x2="903.0" y2="652.6" stroke="#f4f200" stroke-width="1.6"/><line x1="739.3" y1="707.9" x2="903.0" y2="648.3" stroke="#b7a43c" stroke-width="1" stroke-dasharray="1.2 1.2"/><line x1="742.3" y1="710.6" x2="903.0" y2="651.0" stroke="#b7a43c" stroke-width="1" stroke-dasharray="1.2 1.2"/><line x1="757.3" y1="719.6" x2="908.0" y2="662.0" stroke="#b9a08c" stroke-width="1.5"/><line x1="761.3" y1="722.6" x2="910.0" y2="666.0" stroke="#b9a08c" stroke-width="1"/><line x1="913.0" y1="659.0" x2="1013.6" y2="741.5" stroke="#2a2a22" stroke-width="3" opacity="0.85"/><line x1="915.0" y1="656.0" x2="1015.6" y2="737.5" stroke="#f4f200" stroke-width="1.2"/><polygon points="854.5,801.0 1021.6,745.5 1021.6,770.5 874.5,828.0" fill="#a682c3" /><polygon points="844.5,803.0 1021.6,745.5 1021.6,751.5 848.5,809.0" fill="url(#hatch)" /><line x1="844.5" y1="803.0" x2="1021.6" y2="745.5" stroke="#f4f200" stroke-width="1.8"/><line x1="847.9" y1="805.8" x2="1021.6" y2="748.3" stroke="#f4f200" stroke-width="1"/><line x1="851.5" y1="808.8" x2="1021.6" y2="751.3" stroke="#f4f200" stroke-width="1.8"/><line x1="860.5" y1="811.0" x2="1021.6" y2="755.5" stroke="#a8a212" stroke-width="1.2"/><line x1="864.1" y1="817.0" x2="1021.6" y2="761.5" stroke="#f4f200" stroke-width="1.2"/><line x1="866.5" y1="821.0" x2="1021.6" y2="765.5" stroke="#f4f200" stroke-width="1.6"/><line x1="868.6" y1="824.5" x2="1021.6" y2="769.0" stroke="#f4f200" stroke-width="1.4"/><line x1="846.5" y1="804.4" x2="1021.6" y2="746.9" stroke="#b7a43c" stroke-width="1" stroke-dasharray="1.2 1.2"/><line x1="849.5" y1="807.2" x2="1021.6" y2="749.7" stroke="#b7a43c" stroke-width="1" stroke-dasharray="1.2 1.2"/><polygon points="734.4,711.0 747.0,709.5 996.0,917.0 989.5,949.5 734.4,740.0" fill="#a8741a" /><polygon points="734.4,711.0 748.0,709.4 999.0,918.0 990.0,925.5" fill="#e8991b" /><polygon points="734.4,711.0 990.0,925.5 989.6,929.0 734.4,715.6" fill="#c98717" /><polygon points="734.4,731.5 987.0,938.5 989.0,949.5 734.4,740.5" fill="#e8991b" /><line x1="734.4" y1="715.8" x2="989.6" y2="929.2" stroke="#6e4a0e" stroke-width="1.1"/><line x1="734.4" y1="721.0" x2="988.6" y2="933.0" stroke="#8a5f14" stroke-width="1" opacity="0.8"/><line x1="734.4" y1="731.0" x2="987.0" y2="938.0" stroke="#6e4a0e" stroke-width="1"/><line x1="734.4" y1="736.0" x2="988.0" y2="944.5" stroke="#b87c16" stroke-width="1"/><polygon points="734.4,711.0 746.0,709.8 746.0,715.2 734.4,716.0" fill="#f3aa28" /><polygon points="738.4,715.6 742.6,715.4 742.6,734.0 738.4,734.0" fill="#f7c23c" /><polygon points="734.4,733.0 745.6,733.8 745.6,739.8 734.4,740.5" fill="#f3aa28" /><polygon points="987.5,926.5 999.0,918.0 998.5,946.0 989.5,949.5" fill="#e09519" /><polygon points="988.0,926.5 999.0,918.0 1002.0,921.0 991.0,930.0" fill="#c98717" /><path d="M989 927 l10-8.5 M991 930.5 l10.5-8.5 M992 931 V946 M990 949.5 l6-4.5" stroke="#2a2416" stroke-width=".9" fill="none"/><polygon points="872.0,823.5 1039.0,763.8 1039.5,777.0 894.5,829.4" fill="#e8991b" /><line x1="880.0" y1="826.4" x2="1039.0" y2="769.6" stroke="#a06c12" stroke-width="1"/><line x1="888.0" y1="827.6" x2="1039.0" y2="773.6" stroke="#a06c12" stroke-width="0.8"/><polygon points="894.5,829.4 1039.5,777.0 1145.7,864.9 994.8,919.0" fill="#a8abae" /><polygon points="894.5,829.4 1039.5,777.0 1145.7,864.9 994.8,919.0" fill="url(#plate)" /><polygon points="894.5,829.4 1039.5,777.0 1051.5,787.0 908.5,840.4" fill="#dcb27a" opacity="0.28" /><polygon points="997.5,917.5 1151.5,861.5 1154.0,888.5 995.8,946.5" fill="#d48e1a" /><polygon points="997.5,917.5 1151.5,861.5 1151.8,868.5 1002.0,924.5" fill="#f2a521" /><polygon points="996.5,938.5 1153.3,881.5 1154.0,888.5 995.8,946.5" fill="#e8991b" /><line x1="1002.0" y1="925.5" x2="1152.0" y2="869.6" stroke="#3a3020" stroke-width="1.1"/><line x1="998.0" y1="930.0" x2="1152.4" y2="873.5" stroke="#3d4652" stroke-width="1.3" opacity="0.8"/><line x1="996.8" y1="937.5" x2="1153.0" y2="880.6" stroke="#7a5510" stroke-width="1"/><polygon points="1040.0,777.2 1517.0,808.8 1584.5,860.0 1584.5,887.6 1152.0,859.3 1143.7,861.5 1039.5,777.0" fill="#999ea4" /><clipPath id="f2clip"><polygon points="1040.0,777.2 1517.0,808.8 1584.5,860.0 1584.5,887.6 1152.0,859.3 1143.7,861.5 1039.5,777.0"/></clipPath><g clip-path="url(#f2clip)"><polygon points="1062.7,779.5 1074.7,779.5 1165.8,860.2 1153.8,860.2" fill="#b6bbc0" /><polygon points="1050.7,779.5 1062.7,779.5 1153.8,860.2 1141.8,860.2" fill="#a5aab0" /><polygon points="1113.0,782.8 1125.0,782.8 1216.8,863.5 1204.8,863.5" fill="#b6bbc0" /><polygon points="1101.0,782.8 1113.0,782.8 1204.8,863.5 1192.8,863.5" fill="#a5aab0" /><polygon points="1163.3,786.2 1175.3,786.2 1267.8,866.9 1255.8,866.9" fill="#b6bbc0" /><polygon points="1151.3,786.2 1163.3,786.2 1255.8,866.9 1243.8,866.9" fill="#a5aab0" /><polygon points="1213.6,789.5 1225.6,789.5 1318.8,870.2 1306.8,870.2" fill="#b6bbc0" /><polygon points="1201.6,789.5 1213.6,789.5 1306.8,870.2 1294.8,870.2" fill="#a5aab0" /><polygon points="1263.9,792.8 1275.9,792.8 1369.8,873.6 1357.8,873.6" fill="#b6bbc0" /><polygon points="1251.9,792.8 1263.9,792.8 1357.8,873.6 1345.8,873.6" fill="#a5aab0" /><polygon points="1314.2,796.2 1326.2,796.2 1420.8,876.9 1408.8,876.9" fill="#b6bbc0" /><polygon points="1302.2,796.2 1314.2,796.2 1408.8,876.9 1396.8,876.9" fill="#a5aab0" /><polygon points="1364.5,799.5 1376.5,799.5 1471.8,880.2 1459.8,880.2" fill="#b6bbc0" /><polygon points="1352.5,799.5 1364.5,799.5 1459.8,880.2 1447.8,880.2" fill="#a5aab0" /><polygon points="1414.8,802.8 1426.8,802.8 1522.8,883.6 1510.8,883.6" fill="#b6bbc0" /><polygon points="1402.8,802.8 1414.8,802.8 1510.8,883.6 1498.8,883.6" fill="#a5aab0" /><polygon points="1465.1,806.2 1477.1,806.2 1573.8,886.9 1561.8,886.9" fill="#b6bbc0" /><polygon points="1453.1,806.2 1465.1,806.2 1561.8,886.9 1549.8,886.9" fill="#a5aab0" /><polygon points="1040.0,777.2 1517.0,808.8 1526.0,818.8 1050.0,786.2" fill="#dcb27a" opacity="0.32" /><line x1="1074.7" y1="779.5" x2="1165.8" y2="860.2" stroke="#2b3036" stroke-width="2.3"/><line x1="1125.0" y1="782.8" x2="1216.8" y2="863.5" stroke="#2b3036" stroke-width="2.3"/><line x1="1175.3" y1="786.2" x2="1267.8" y2="866.9" stroke="#2b3036" stroke-width="2.3"/><line x1="1225.6" y1="789.5" x2="1318.8" y2="870.2" stroke="#2b3036" stroke-width="2.3"/><line x1="1275.9" y1="792.8" x2="1369.8" y2="873.6" stroke="#2b3036" stroke-width="2.3"/><line x1="1326.2" y1="796.2" x2="1420.8" y2="876.9" stroke="#2b3036" stroke-width="2.3"/><line x1="1376.5" y1="799.5" x2="1471.8" y2="880.2" stroke="#2b3036" stroke-width="2.3"/><line x1="1426.8" y1="802.8" x2="1522.8" y2="883.6" stroke="#2b3036" stroke-width="2.3"/><line x1="1477.1" y1="806.2" x2="1573.8" y2="886.9" stroke="#2b3036" stroke-width="2.3"/></g><line x1="1040.5" y1="778.0" x2="1144.7" y2="861.5" stroke="#50565c" stroke-width="1.4"/><line x1="1044.5" y1="777.0" x2="1149.7" y2="860.5" stroke="#d0d3d6" stroke-width="1.2"/><line x1="1047.5" y1="777.0" x2="1153.7" y2="860.0" stroke="#6b7178" stroke-width="1"/><polygon points="1049.0,765.6 1519.0,797.8 1523.0,801.6 1517.0,808.8 1040.0,777.2 1040.0,769.0" fill="#e8991b" /><polygon points="1049.0,765.6 1519.0,797.8 1521.0,799.8 1519.5,803.2 1044.0,771.8 1040.0,769.0" fill="#c98d1c" /><line x1="1044.0" y1="771.8" x2="1519.5" y2="803.2" stroke="#8a5f12" stroke-width="1"/><line x1="1049.0" y1="765.6" x2="1519.0" y2="797.8" stroke="#c07f14" stroke-width="1"/><polygon points="1152.0,859.3 1584.5,887.6 1584.5,915.2 1153.0,887.6" fill="#e8991b" /><polygon points="1152.0,859.3 1584.5,887.6 1584.5,894.1 1152.0,865.8" fill="#c98d1c" /><polygon points="1153.0,880.6 1584.5,908.2 1584.5,915.2 1153.0,887.6" fill="#d48e1a" /><line x1="1152.0" y1="866.3" x2="1584.5" y2="894.6" stroke="#3a3020" stroke-width="1.1"/><line x1="1152.0" y1="870.3" x2="1584.5" y2="898.6" stroke="#444c56" stroke-width="1.5" opacity="0.85"/><line x1="1153.0" y1="880.6" x2="1584.5" y2="908.2" stroke="#8a5f10" stroke-width="1"/><path d="M1177.0 870.1 l3 2.4 l7-4" fill="none" stroke="#3a3020" stroke-width=".9"/><path d="M1228.0 873.5 l3 2.4 l7-4" fill="none" stroke="#3a3020" stroke-width=".9"/><path d="M1279.0 876.8 l3 2.4 l7-4" fill="none" stroke="#3a3020" stroke-width=".9"/><path d="M1330.0 880.1 l3 2.4 l7-4" fill="none" stroke="#3a3020" stroke-width=".9"/><path d="M1381.0 883.5 l3 2.4 l7-4" fill="none" stroke="#3a3020" stroke-width=".9"/><path d="M1432.0 886.8 l3 2.4 l7-4" fill="none" stroke="#3a3020" stroke-width=".9"/><path d="M1483.0 890.2 l3 2.4 l7-4" fill="none" stroke="#3a3020" stroke-width=".9"/><path d="M1534.0 893.5 l3 2.4 l7-4" fill="none" stroke="#3a3020" stroke-width=".9"/><path d="M1585.0 896.8 l3 2.4 l7-4" fill="none" stroke="#3a3020" stroke-width=".9"/><polygon points="1019.0,752.0 1031.0,764.0 1026.0,770.0 1019.0,771.0" fill="#a682c3" /><path d="M1211.2 314.5 L1222.2 310.2 L1233.2 319.0 L1221.8 322.6z" fill="none" stroke="#0a0a0a" stroke-width="1.2" stroke-linejoin="round"/><path d="M1211.2 314.5 v17.5 M1221.8 322.6 v25.0 M1233.2 319.0 v25.0" fill="none" stroke="#1a1020" stroke-width="1" opacity=".65"/><path d="M1211.2 332.0 L1221.8 347.6 L1233.2 344.0" fill="none" stroke="#1a1020" stroke-width=".9" opacity=".35"/><path d="M1327.4 409.7 L1338.9 405.5 L1349.2 414.0 L1337.7 418.8z" fill="none" stroke="#0a0a0a" stroke-width="1.2" stroke-linejoin="round"/><path d="M1327.4 409.7 v16.8 M1337.7 418.8 v24.0 M1349.2 414.0 v24.0" fill="none" stroke="#1a1020" stroke-width="1" opacity=".65"/><path d="M1327.4 426.5 L1337.7 442.8 L1349.2 438.0" fill="none" stroke="#1a1020" stroke-width=".9" opacity=".35"/><path d="M895.4 644.6 L905.6 641.2 L916.3 648.4 L905.4 652.7z" fill="none" stroke="#0a0a0a" stroke-width="1.2" stroke-linejoin="round"/><path d="M895.4 644.6 v15.4 M905.4 652.7 v22.0 M916.3 648.4 v22.0" fill="none" stroke="#1a1020" stroke-width="1" opacity=".65"/><path d="M895.4 660.0 L905.4 674.7 L916.3 670.4" fill="none" stroke="#1a1020" stroke-width=".9" opacity=".35"/><path d="M1011.4 738.7 L1020.6 735.4 L1033.6 743.5 L1021.5 746.7z" fill="none" stroke="#0a0a0a" stroke-width="1.2" stroke-linejoin="round"/><path d="M1011.4 738.7 v14.7 M1021.5 746.7 v21.0 M1033.6 743.5 v21.0" fill="none" stroke="#1a1020" stroke-width="1" opacity=".65"/><path d="M1011.4 753.4 L1021.5 767.7 L1033.6 764.5" fill="none" stroke="#1a1020" stroke-width=".9" opacity=".35"/><path d="M1033.6 763.7 L1038.8 759.7 L1048.1 768.6 L1042.5 771.4z" fill="none" stroke="#0a0a0a" stroke-width="1.2" stroke-linejoin="round"/><path d="M1033.6 763.7 v7.7 M1042.5 771.4 v11.0 M1048.1 768.6 v11.0" fill="none" stroke="#1a1020" stroke-width="1" opacity=".65"/><path d="M1033.6 771.4 L1042.5 782.4 L1048.1 779.6" fill="none" stroke="#1a1020" stroke-width=".9" opacity=".35"/><path d="M1146.0 857.9 L1153.8 854.6 L1163.8 861.3 L1156.0 865.7z" fill="none" stroke="#0a0a0a" stroke-width="1.2" stroke-linejoin="round"/><path d="M1146.0 857.9 v17.5 M1156.0 865.7 v25.0 M1163.8 861.3 v25.0" fill="none" stroke="#1a1020" stroke-width="1" opacity=".65"/><path d="M1146.0 875.4 L1156.0 890.7 L1163.8 886.3" fill="none" stroke="#1a1020" stroke-width=".9" opacity=".35"/><polygon points="1585.0,205.0 1626.8,205.0 1626.8,985.5 1585.0,951.0" fill="#5f5f5c" /><polygon points="1626.8,205.0 1791.5,205.0 1791.5,927.0 1626.8,985.5" fill="#6e6d6a" /><polygon points="1585.0,205.0 1626.8,205.0 1626.8,985.5 1585.0,951.0" fill="#000" opacity="0.085" filter="url(#conc)"/><polygon points="1626.8,205.0 1791.5,205.0 1791.5,927.0 1626.8,985.5" fill="#000" opacity="0.08" filter="url(#conc)"/><polygon points="1585.0,205.0 1791.5,205.0 1791.5,927.0 1626.8,985.5 1585.0,951.0" fill="#000" opacity="0.1" filter="url(#conc2)"/><path d="M1585 205 V951 L1626.8 985.5 L1791.5 927 V205 M1626.8 205 V985.5" fill="none" stroke="#141414" stroke-width="1"/><path d="M1585 533.4 L1626.8 565 L1791.5 508.6" fill="none" stroke="#141414" stroke-width="1"/><polygon points="1585.0,890.0 1626.8,892.0 1640.0,896.0 1632.0,918.0 1585.0,915.0" fill="#d89a2c" opacity="0.33" /><line x1="1585.0" y1="852.0" x2="1708.0" y2="956.5" stroke="#ffffff" stroke-width="1" stroke-dasharray="12 3.4 4 3.4 12 3.4" opacity="0.45"/><line x1="1626.8" y1="985.5" x2="1764.0" y2="937.5" stroke="#ffffff" stroke-width="1.6" stroke-dasharray="12 3 4.5 3 12 3"/><g><path d="M539 936.5 L521.4 922 M539 936.5 L566.7 927" stroke="#a8a8a8" stroke-width="3.2" fill="none"/><path d="M519.5 920.4 l6.4 0.6 l-3.6 4.4z M569 926.2 l-5.6-2.6 l1.4 5.2z" fill="#b4b4b4"/><polygon points="537,935 528.7,924.5 546.9,918 557.8,927.3" fill="#0000f0"/><rect x="537" y="915" width="4" height="23.5" rx="1.6" fill="#e60000"/><path d="M539 909.4 l4.3 8 h-8.6z" fill="#ff0000"/></g><text x="539.6" y="904.8" font-family="Liberation Sans, sans-serif" font-size="13.2" fill="#fff" stroke="#000" stroke-width="0.45" paint-order="stroke">Z</text><text x="517.8" y="919.6" font-family="Liberation Sans, sans-serif" font-size="13.2" fill="#fff" stroke="#000" stroke-width="0.45" paint-order="stroke">Y</text><text x="570.4" y="926" font-family="Liberation Sans, sans-serif" font-size="13.2" fill="#fff" stroke="#000" stroke-width="0.45" paint-order="stroke">X</text><rect x="1061" y="215" width="283" height="40" fill="#ececec"/><g fill="none" stroke="#333" stroke-width="2"><rect x="1068" y="222" width="26" height="26.5"/></g><g fill="#3a3a3a"><path d="M1071 225 h7 l-2.4 2.4 l3 3 l-2.2 2.2 l-3-3 l-2.4 2.4z"/><path d="M1071 245.5 v-7 l2.4 2.4 l3-3 l2.2 2.2 l-3 3 l2.4 2.4z"/></g><g fill="none" stroke="#353535" stroke-width="1.9" stroke-linejoin="round" stroke-linecap="round"><path d="M1308 220.8 V231.6 M1300.2 243.2 l-6.6 4 M1316 243.2 l7.2 4.2"/><path d="M1308 231.6 l7.9 3.8 v7.8 l-7.9 5.2 l-7.9-5.2 v-7.8z M1300.1 235.4 l7.9 4.2 l7.9-4.2 M1308 239.6 v8.8"/></g><path d="M1331 233.2 l4.4 4.4 l4.4-4.4" fill="none" stroke="#444" stroke-width="1.1"/></g></svg>
<svg class="b" style="left:0;top:0;pointer-events:none" width="1812" height="989" viewBox="0 0 1812 989"><g fill="#2d8fd6"><rect x="8.5" y="12.2" width="9.5" height="1.6"/><rect x="8.5" y="14.8" width="9.5" height="1.6"/><rect x="8.5" y="17.3" width="15.5" height="1.7"/><rect x="18.6" y="14" width="1.6" height="4"/></g><rect x="8.5" y="12.2" width="3" height="6.8" fill="#39a0e6" opacity=".6"/>
<g><path d="M40.5 10.5 h9 l2.5 2.5 v9 h-11.5z" fill="none" stroke="#222" stroke-width="1.4"/><rect x="43" y="10.5" width="5.5" height="4.2" fill="#222"/><rect x="46.2" y="11.2" width="1.3" height="2.4" fill="#fff"/><rect x="42.6" y="17.3" width="7.4" height="4.6" fill="#fff" stroke="#222" stroke-width="1.2"/></g>
<g><path d="M68.3 20.6 V10.6 h5 l1.5 1.7 h6.2 v2" fill="#e8963a" stroke="#e8963a" stroke-width="1" stroke-linejoin="round"/><path d="M68.6 20.8 l3.2-6.3 h11.2 l-3.2 6.3z" fill="#f0a553" stroke="#e08a2c" stroke-width=".8" stroke-linejoin="round"/></g>
<path d="M98.7 10.3 h6.3 l3.7 3.7 v7.6 h-10z M105 10.3 v3.7 h3.7" fill="none" stroke="#222" stroke-width="1.2" stroke-linejoin="round"/>
<path d="M131.3 15 l6.3-5 v3 c5 0 8.4 2 9.3 6.8 c-2-2.6-4.8-3.2-9.3-3.1 v3.2z" fill="#0f6cd4"/>
<path d="M157.50 14.40 L161.50 18.60 L165.50 14.40" fill="none" stroke="#555" stroke-width="1" stroke-linecap="round" stroke-linejoin="round"/>
<path d="M191.4 15 l-6.3-5 v3 c-5 0-8.4 2-9.3 6.8 c2-2.6 4.8-3.2 9.3-3.1 v3.2z" fill="#9cc7f0"/>
<rect x="208.2" y="13.2" width="9.4" height="1.4" fill="#111"/><path d="M208.2 15.6 h9.4 l-4.7 4z" fill="#111"/>
<rect x="120" y="4" width="1" height="24" fill="#f0f0f0"/>
<rect x="1800.5" y="16" width="12" height="1" fill="#333"/>
<g transform="translate(13.40,78)"><g transform="translate(2.7,0)"><g fill="#3b3b3b"><rect x="0" y="29.6" width="28" height="2" rx="1"/><path d="M6 32 V2.6 h7 V0 h9 v32 h-5.5 v-6 h-6 v6z"/></g>
<g fill="#fff"><rect x="10.2" y="5.6" width="8.6" height="1.9"/><rect x="10.2" y="9" width="8.6" height="1.9"/><rect x="10.2" y="12.4" width="8.6" height="1.9"/><rect x="10.2" y="15.8" width="8.6" height="1.9"/><rect x="10.2" y="19.2" width="8.6" height="1.9"/>
<rect x="7.6" y="5.9" width="1.3" height="1.3"/><rect x="7.6" y="9.3" width="1.3" height="1.3"/><rect x="7.6" y="12.7" width="1.3" height="1.3"/><rect x="7.6" y="16.1" width="1.3" height="1.3"/><rect x="7.6" y="19.5" width="1.3" height="1.3"/><rect x="11" y="26.3" width="5" height="3.3"/></g></g></g>
<g transform="translate(53.00,78)"><g transform="translate(-1,0)"><path d="M0.8 2.2 h24.4 v2.2 l-9.8 10.4 v11 l-3.6 4 v-15z" fill="#3b3b3b"/><rect x="18.3" y="17.2" width="13" height="13.6" fill="#fff" stroke="#3b3b3b" stroke-width="1.9"/><path d="M21.4 23.2 l3.8 4 l7-8.3" fill="none" stroke="#2ea44f" stroke-width="2.9"/></g></g>
<path d="M65.10 132.85 L69.00 136.75 L72.90 132.85" fill="none" stroke="#444" stroke-width="1" stroke-linecap="round" stroke-linejoin="round"/>
<g transform="translate(96.00,78)"><path d="M0.4 0.2 h31.2 c-0.6 3.6-5 3.6-12.3 3.9 v23.6 c7.3 0.3 11.7 0.5 12.3 4.1 h-31.2 c0.6-3.6 5-3.8 12.3-4.1 v-23.6 c-7.3-0.3-11.7-0.3-12.3-3.9z" fill="#3b3b3b"/></g>
<g transform="translate(146.20,78)"><g fill="none" stroke="#3b3b3b" stroke-width="1.2" stroke-linecap="round" stroke-linejoin="round"><path d="M2.8 31.5 V1.2 M0.4 3.6 l2.4-2.8 l2.4 2.8 M1 29.2 H30.6 M28 26.8 l2.8 2.4 l-2.8 2.4"/><path d="M3 21.8 c6 0 6.3-3 8-7.4 c1.6-4.4 3-4.8 4.6-4.8 c4.6 0 3.6 11.6 5.2 14.8 c0.9 1.8 2.4 1.9 3.6 1.9"/><path d="M1 6.5h1.8M1 12h1.8M1 17.5h1.8M1 23.5h1.8M8.5 29.2v1.8M14 29.2v1.8M19.5 29.2v1.8M25 29.2v1.8" stroke-width=".9"/></g></g>
<g transform="translate(198.50,78)"><path d="M8.3 2.2 L12.4 0.2 L14.1 1.2 V26 L12.4 27.2 L8.3 25z" fill="#ff0f0f"/><path d="M14.1 2.6 L20.3 5.6 V30 L14.1 26.6z" fill="#c90000"/><path d="M20.3 5.2 L22.6 4.2 L24.75 5.4 V30.4 L22.6 31.5 L20.3 30.2z" fill="#ff0f0f"/><path d="M14.1 1.2 L20.3 4.4 V5.6 L14.1 2.6z" fill="#e80000"/><path d="M8.3 25 l2 1.2 l2.1-1 l1.7 0.8 v1.4 l-1.7 0.8z" fill="#ff0f0f"/></g>
<g transform="translate(237.90,78)"><path d="M6 27.2 V13 l21-9.4 v14.4z" fill="#fdc21e"/><path d="M0 12.4 l27-12.2 l5 2.6 l-27 12.2z" fill="#9b6a14"/><path d="M0 12.4 l5 2.6 v1.2 l-5-2.6z" fill="#c68f1a"/><path d="M5 15 l27-12.2 v1.2 l-27 12.2z" fill="#e0a51c"/><path d="M0 27.2 l5 2.6 l27-12.2 l-5-1.4 l-21 9.4z" fill="#b8841a"/><path d="M0 27.2 l5 2.6 v1.4 l-5-2.6z M5 29.8 l27-12.2 v1.4 l-27 12.2z" fill="#e0a51c"/></g>
<g transform="translate(286.60,78)"><path d="M0.5 15.5 L16 7.6 L32 14.5 L16.3 23.2z" fill="#b6c8d8"/><path d="M0.5 15.5 L16 7.6 L32 14.5 L30 15.4 L16 9.6 L3 16.7z" fill="#dfe3e6"/><path d="M0.5 15.5 v2 L16.3 25 v-1.8z" fill="#8fa9c2"/><path d="M16.3 23.2 v1.8 L32 16.4 v-1.9z" fill="#5e8fbe"/><path d="M5 15.5 L19.5 22 M9 13.6 L23.5 20 M13 11.6 L27.5 17.8" stroke="#93abc2" stroke-width="1.2" fill="none"/></g>
<g transform="translate(342.00,78)"><path d="M0 13.5 L15.6 7.6 L17.8 10.6 L21 9.2 L23.5 13.6 L32 14.6 L28.7 17 L14.8 23.8 L12.4 20.6 L9 21.4 L6.6 17.6z" fill="#f7a6a6"/><path d="M15.6 7.6 L17.8 10.6 L4 17 L0 13.5z M21 9.2 L23.5 13.6 L9.6 20.8 L6.6 17.6z" fill="#f29191"/><path d="M12.4 20.6 L14.8 23.8 L28.7 17 L26.4 14.2z" fill="#e98585"/><path d="M0 13.5 L6.6 17.6 L9 21.4 L12.4 20.6 L14.8 23.8" stroke="#e07070" stroke-width=".6" fill="none"/></g>
<g transform="translate(394.80,78)"><path d="M0 15.7 L15.6 8.9 L30.6 15.6 L15.6 23z" fill="#8a8a8a"/></g>
<g transform="translate(448.10,78)"><path d="M6 5.2 l8.4-4.6 l9.8 4.6 v22 l-9.8 4.8 l-8.4-4.8z" fill="#9c9c9c"/><path d="M6 5.2 l8.4 4.6 v22.2 l-8.4-4.8z" fill="#727272"/><path d="M6 5.2 l8.4-4.6 l9.8 4.6 l-9.8 4.6z" fill="#5c5c5c"/></g>
<g transform="translate(486.00,78)"><path d="M0 11.6 L22 2.8 L32 7.6 V19 L10 28.7 L0 23.4z" fill="#8ea5bd"/><path d="M0 11.6 L10 16.6 V28.7 L0 23.4z" fill="#6b7f94"/><path d="M0 11.6 L22 2.8 L32 7.6 L10 16.6z" fill="#4b5664"/></g>
<g transform="translate(531.00,78)"><path d="M0 14.4 L16 7.7 L32 13.6 L16 21.4z" fill="#a9a9a9"/><path d="M0 14.4 v2.2 L16 23.7 v-2.3z" fill="#d6d6d6"/><path d="M16 21.4 v2.3 L32 15.8 v-2.2z" fill="#ececec"/></g>
<g transform="translate(574.60,78)"><path d="M6.8 8.6 L24.6 0.8 V23 L6.8 31z" fill="#929292"/><path d="M5.8 8.2 l1-0.2 V31.4 l-1-0.6z" fill="#555"/><path d="M5.8 8.2 L23.8 0.3 L25.2 0.8 L6.8 8.8z" fill="#444"/><path d="M24.6 0.8 l0.8 0.2 V22.6 l-0.8 0.4z" fill="#555"/></g>
<g transform="translate(613.80,78)"><path d="M6.4 9 L25.4 0.6 V23.6 L6.4 31.8z" fill="#dc7f7b"/><path d="M6.4 9 L25.4 0.6 l0.8 0.5 V24 l-0.8-0.4z" fill="#c96a66" opacity=".6"/><g stroke="#f3e7e2" stroke-width="1.2" fill="none"><path d="M6.4 16.6 L25.4 8.3 M6.4 24.2 L25.4 16"/><path d="M15.5 5 v7.6 M10.6 14.8 v7.6 M20.4 10.5 v7.6 M15.5 20.2 v7.6 M22.6 2 v7.4 M22.6 17.3 v7.4 M8.8 8 v7.4 M8.8 23.2 v7.4"/></g></g>
<g transform="translate(666.00,78)"><defs><radialGradient id="dg" cx="0.54" cy="0.62" r="0.62"><stop offset="0" stop-color="#f2f2f2"/><stop offset="0.25" stop-color="#9a9a9a"/><stop offset="1" stop-color="#4e4e4e"/></radialGradient></defs><path d="M0.4 20.6 C0.4 8 8 4 16 4 C24 4 31.6 8 31.6 20.6 C31.6 24.6 24 27.4 16 27.4 C8 27.4 0.4 24.6 0.4 20.6z" fill="url(#dg)"/></g>
<path d="M701.85 133.80 L705.65 137.60 L709.45 133.80" fill="none" stroke="#444" stroke-width="1" stroke-linecap="round" stroke-linejoin="round"/>
<g transform="translate(730.20,78)"><path d="M6 5.4 l9-5 l9 5 v21.6 l-9 5 l-9-5z" fill="#fef200"/><path d="M6 5.4 l9 5 v21.6 l-9-5z" fill="#d9a700"/><path d="M6 5.4 l9-5 l9 5 l-9 5z" fill="#8f6e00"/></g>
<g transform="translate(768.00,78)"><path d="M0 12 L22 2.8 L32 7.4 V19 L10 29 L0 23.6z" fill="#fef21a"/><path d="M0 12 L10 16.8 V29 L0 23.6z" fill="#dcd61a"/><path d="M0 12 L22 2.8 L32 7.4 L10 16.8z" fill="#8c8a10"/></g>
<g transform="translate(819.00,78)"><path d="M0 14.6 L16 7.4 L32 14.6 L16 22.4z" fill="#8d8d8d"/><path d="M0 14.6 v3.4 L16 26 v-3.6z" fill="#c9c9c9"/><path d="M16 22.4 v3.6 L32 18 v-3.4z" fill="#ececec"/><path d="M11.4 8.2 l4.8-2.2 l4.8 2.2 v6 l-4.8 2.4 l-4.8-2.4z" fill="#e6e6e6"/><path d="M11.4 8.2 l4.8 2.4 v6 l-4.8-2.4z" fill="#c2c2c2"/><path d="M11.4 8.2 l4.8-2.2 l4.8 2.2 l-4.8 2.4z" fill="#9b9b9b"/></g>
<g transform="translate(859.70,78)"><path d="M0 20 L20.4 10.4 L32 14.6 L12.6 24.6z" fill="#8d8d8d"/><path d="M0 20 v3.4 L12.6 28 v-3.4z" fill="#c9c9c9"/><path d="M12.6 24.6 v3.4 L32 18 v-3.4z" fill="#ececec"/><path d="M5.2 11.6 L25.4 3.4 L28.6 4.6 V11.2 L8.4 20.4 L5.2 19z" fill="#e9e9e9"/><path d="M5.2 11.6 l3.2 1.3 v7.5 L5.2 19z" fill="#c6c6c6"/><path d="M5.2 11.6 L25.4 3.4 L28.6 4.6 L8.4 12.9z" fill="#a5a5a5"/></g>
<g transform="translate(900.00,78)"><path d="M0 14.6 L16 8 L32 14 L16 21z" fill="#b2b2b2"/><path d="M0 14.6 v2.2 L16 23.4 v-2.4z" fill="#d6d6d6"/><path d="M16 21 v2.4 L32 16.2 v-2.2z" fill="#ececec"/></g>
<g transform="translate(939.00,78)"><rect x="5" y="5.6" width="22" height="20" fill="none" stroke="#222" stroke-width="5"/><rect x="5" y="5.6" width="22" height="20" fill="none" stroke="#4a90e2" stroke-width="3"/><g fill="#7d7d7d" stroke="#222" stroke-width="1"><rect x="0.5" y="1.5" width="9" height="9" rx="1"/><rect x="22.5" y="1.5" width="9" height="9" rx="1"/><rect x="0.5" y="21" width="9" height="9" rx="1"/><rect x="22.5" y="21" width="9" height="9" rx="1"/></g></g>
<g transform="translate(994.60,78)"><path d="M1.4 5.2 L5.8 1 L31.6 27 a3 3 0 0 1 -4.4 4.4z" fill="#3b3b3b"/><path d="M4.2 5.6 l1.8-1.8 l4.4 4.4 l-1.8 1.8z" fill="#fff"/><path d="M25.62 0.11 L26.50 4.80 L31.14 5.89 L26.95 8.18 L27.35 12.93 L23.88 9.65 L19.48 11.50 L21.53 7.19 L18.41 3.57 L23.14 4.19z" fill="#3b3b3b"/></g>
<path d="M1033.25 133.80 L1037.05 137.60 L1040.85 133.80" fill="none" stroke="#444" stroke-width="1" stroke-linecap="round" stroke-linejoin="round"/>
<g transform="translate(1049.00,78)"><g fill="none" stroke="#2bd2d8"><path d="M0.4 12.4 H32 M0.4 19.8 H32" stroke-width="1.1"/><path d="M0.8 12.4 V19.8 M31.6 12.4 V19.8 M4.6 12.4 V19.8 M10 12.4 V19.8 M16 12.4 V19.8 M22 12.4 V19.8 M27.4 12.4 V19.8" stroke-width=".6"/><path d="M0.8 12.4 L4.6 19.8 M4.6 12.4 L10 19.8 M10 19.8 L16 12.4 L22 19.8 M22 19.8 L27.4 12.4 M27.4 19.8 L31.6 12.4" stroke-width=".7"/></g></g>
<path d="M1061.10 132.85 L1065.00 136.75 L1068.90 132.85" fill="none" stroke="#444" stroke-width="1" stroke-linecap="round" stroke-linejoin="round"/>
<g transform="translate(1122.80,78)"><polygon points="12.6,7.8 18.9,4.9 32.0,10.6 25.1,13.6" fill="#d6d8da"/><polygon points="6.8,17.7 12.6,7.8 25.1,13.6 19.9,23.5" fill="#c9cbcd"/><polygon points="0.2,20.9 6.8,17.7 19.9,23.5 13.5,27.1" fill="#cfd1d3"/><line x1="12.0" y1="8.8" x2="24.6" y2="14.6" stroke="#7b858f" stroke-width=".8" stroke-dasharray="1.4 .8"/><line x1="10.9" y1="10.7" x2="23.6" y2="16.5" stroke="#7b858f" stroke-width=".8" stroke-dasharray="1.4 .8"/><line x1="9.8" y1="12.6" x2="22.6" y2="18.4" stroke="#7b858f" stroke-width=".8" stroke-dasharray="1.4 .8"/><line x1="8.7" y1="14.4" x2="21.6" y2="20.2" stroke="#7b858f" stroke-width=".8" stroke-dasharray="1.4 .8"/><line x1="7.6" y1="16.3" x2="20.6" y2="22.1" stroke="#7b858f" stroke-width=".8" stroke-dasharray="1.4 .8"/><polyline points="0.2,20.9 6.8,17.7 12.6,7.8 18.9,4.9" fill="none" stroke="#f0a826" stroke-width="1.3" stroke-linejoin="round"/><polyline points="32.0,10.6 25.1,13.6 19.9,23.5 13.5,27.1" fill="none" stroke="#eea420" stroke-width="1.6" stroke-linejoin="round"/></g>
<path d="M1134.90 132.85 L1138.80 136.75 L1142.70 132.85" fill="none" stroke="#444" stroke-width="1" stroke-linecap="round" stroke-linejoin="round"/>
<g transform="translate(1199.80,78)"><g fill="none" stroke="#eaa93a" stroke-width=".7"><path d="M0.4 16 L16 8 L31.6 16 L16 24z"/><path d="M8.2 12 L23.8 20 M23.8 12 L8.2 20 M16 8 V24 M0.4 16 H31.6" stroke-dasharray="1.6 1"/><circle cx="16" cy="16" r="3.6"/><path d="M5.6 16 L16 10.6 L26.4 16 L16 21.4z" stroke-dasharray="1.6 1.2"/><circle cx="16" cy="16" r="1.2" stroke-width=".5"/></g></g>
<path d="M1227.30 133.80 L1231.10 137.60 L1234.90 133.80" fill="none" stroke="#444" stroke-width="1" stroke-linecap="round" stroke-linejoin="round"/>
<g transform="translate(1242.00,78)"><g fill="none"><path d="M7.4 8 V30 M11.2 4 V28 M19 0.6 V24 M22.8 4.8 V27" stroke="#e03a3a" stroke-width="1"/><path d="M7.4 8V30 M22.8 4.8V27" stroke="#f5a21a" stroke-width="1" stroke-dasharray="1.2 1.2"/><path d="M7.4 12 L19 6 M7.4 26 L19 20 M11.2 16 l11.6-6" stroke="#f5a21a" stroke-width=".8" stroke-dasharray="1.2 1"/><path d="M6.4 17.4 L21 10 L24 12 L9.6 19.6z M6.4 30 L21 22.6 L24 24.6 L9.6 32z" fill="#9aa3b0" stroke="#7d8794" stroke-width=".5"/><path d="M11 5 L19 12 M11 16 L19 22" stroke="#7ec6e8" stroke-width=".6"/><path d="M5.6 30.8 h3 M21.6 27.6 h3" stroke="#fee000" stroke-width="1.4"/></g></g>
<path d="M1254.10 132.85 L1258.00 136.75 L1261.90 132.85" fill="none" stroke="#444" stroke-width="1" stroke-linecap="round" stroke-linejoin="round"/>
<g transform="translate(1283.00,78)"><g><path d="M9.6 3 V28.6 M18.8 0.4 V27" stroke="#9fb0c6" stroke-width="1" fill="none"/><path d="M0.4 10.8 L26 0.6 l1.4 2.2 L1.8 13.2z M0.4 20 L26 9.8 l1.4 2.2 L1.8 22.4z M0.4 29.4 L26 19.2 l1.4 2.2 L1.8 31.8z" fill="#f5a623"/><path d="M0.4 10.8 l1.4 2.4 M0.4 20 l1.4 2.4 M0.4 29.4 l1.4 2.4" stroke="#d48a14" stroke-width=".6"/></g></g>
<path d="M1293.10 132.85 L1297.00 136.75 L1300.90 132.85" fill="none" stroke="#444" stroke-width="1" stroke-linecap="round" stroke-linejoin="round"/>
<g transform="translate(1320.00,78)"><g fill="none"><path d="M0.35 15.4 L15.4 9.2 M16.2 22.5 L31.7 16.3" stroke="#c8861e" stroke-width="1" stroke-dasharray="2 1.3"/><path d="M8 11.4 L24.8 18.8" stroke="#4d4d4d" stroke-width="2.3"/><path d="M8.3 10.6 L25.1 18" stroke="#8a8a8a" stroke-width=".6"/></g></g>
<path d="M1332.10 132.85 L1336.00 136.75 L1339.90 132.85" fill="none" stroke="#444" stroke-width="1" stroke-linecap="round" stroke-linejoin="round"/>
<g transform="translate(1360.80,78)"><g><path d="M5 9 L27 25 M16.6 2 L17.4 25" stroke="#7fd6e6" stroke-width=".8" fill="none"/><path d="M0.8 8.6 l2.8-1.6 L16.4 30 l-2.8 1.6z" fill="#f0b41e"/><path d="M3.6 7 l1 0.5 L17.4 30.4 l-1 -0.4z" fill="#9c7410"/><path d="M15.4 1.6 l2.8-1.6 L31 23 l-2.8 1.6z" fill="#f0b41e"/><path d="M18.2 0 l1 0.5 L32 23.4 l-1-0.4z" fill="#9c7410"/></g></g>
<path d="M1372.90 132.85 L1376.80 136.75 L1380.70 132.85" fill="none" stroke="#444" stroke-width="1" stroke-linecap="round" stroke-linejoin="round"/>
<g transform="translate(1410.00,78)"><path d="M3 13.6 L17 7.2 L30.6 12.6 L16.6 20.2z" fill="#5f93c8"/><path d="M7.6 12.4 L20.6 18 M11.8 10.4 L25 15.8" stroke="#4377ad" stroke-width="1.3" fill="none"/><path d="M0.4 13 L16.2 20.6 l0 3.4 L0.4 16.6z" fill="#f0a21e"/><path d="M16.2 20.6 L32 12.6 v3 L16.2 24z" fill="#d98c14"/><path d="M15.6 6.8 l2.4-1 L32 11.6 v1 l-2.6 0.8z" fill="#f0a21e"/><path d="M0.4 13 l2.8-1.2 L17.6 18.8 l-1.4 1.8z" fill="#f7b840"/></g>
<path d="M1442.95 133.80 L1446.75 137.60 L1450.55 133.80" fill="none" stroke="#444" stroke-width="1" stroke-linecap="round" stroke-linejoin="round"/>
<g transform="translate(1469.20,80.5)"><g><path d="M3 13 L17.6 6 L30 11.4 L15.6 19.4z" fill="#2fc9cf" opacity=".55"/><path d="M4.4 13.2 L18.4 7 M7.4 15 L21.6 8.6 M11 17 L25 10 M14 18.6 L28 11" stroke="#22bfc6" stroke-width="1" stroke-dasharray="1.2 .8" fill="none"/><path d="M0.4 12 l2.2-1.2 L17.8 19.6 l-2 1.6z" fill="#f0a21e"/><path d="M14.8 5.6 l2.2-1 L32 12 l-2.2 1.2z" fill="#f0a21e"/><path d="M7.6 8.6 l2-1 L25 16 l-2 1.2z" fill="#f0a21e" opacity=".85"/></g></g>
<path d="M1481.30 132.85 L1485.20 136.75 L1489.10 132.85" fill="none" stroke="#444" stroke-width="1" stroke-linecap="round" stroke-linejoin="round"/>
<g transform="translate(1527.00,78)"><g stroke="#3b3b3b" stroke-width="2.4" stroke-linecap="round" fill="none"><path d="M6 1.4 V30.6 M16 1.4 V30.6 M26 1.4 V30.6 M1.4 6 H30.6 M1.4 16 H30.6 M1.4 26 H30.6"/></g></g>
<path d="M1539.10 132.85 L1543.00 136.75 L1546.90 132.85" fill="none" stroke="#444" stroke-width="1" stroke-linecap="round" stroke-linejoin="round"/>
<g transform="translate(1567.00,78)"><g stroke="#3b3b3b" stroke-width="1.3" fill="none"><circle cx="5.4" cy="16" r="3.7"/><path d="M9.2 16 H30.7"/></g></g>
<g transform="translate(1607.40,78)"><rect x="4.2" y="5.1" width="23.6" height="23.4" fill="#fff" stroke="#3b3b3b" stroke-width="2"/><g fill="#e8963a"><rect x="7.4" y="8.2" width="7.6" height="8.8"/><rect x="17.4" y="8.2" width="7.6" height="8.8"/><rect x="7.4" y="19.4" width="17.6" height="6"/></g></g>
<path d="M1634.55 133.80 L1638.35 137.60 L1642.15 133.80" fill="none" stroke="#444" stroke-width="1" stroke-linecap="round" stroke-linejoin="round"/>
<g transform="translate(1660.00,78)"><rect x="4" y="5" width="26" height="21.6" fill="#fff" stroke="#3b3b3b" stroke-width="2"/><rect x="3" y="4" width="28" height="5.4" fill="#0f6cd4"/></g>
<path d="M1673.10 132.85 L1677.00 136.75 L1680.90 132.85" fill="none" stroke="#444" stroke-width="1" stroke-linecap="round" stroke-linejoin="round"/>
<g transform="translate(1721.00,78)"><rect x="1" y="2.2" width="31" height="19.6" rx="1" fill="#43a25a"/><path d="M20.6 4 h9.6 v15.6 h-3 z" fill="#fff"/><g fill="none" stroke="#3b3b3b" stroke-width="1.9"><circle cx="14.4" cy="28.4" r="2.6"/><circle cx="26" cy="28.4" r="2.6"/></g><path d="M10.6 9 L24.6 26 l-2 1.2 L13.8 17z" fill="#3b3b3b" stroke="#fff" stroke-width=".7"/><path d="M28.6 11 L16 26 l2 1.2 L27 17z" fill="#3b3b3b" stroke="#fff" stroke-width=".7"/></g>
<path d="M1756.15 133.80 L1759.95 137.60 L1763.75 133.80" fill="none" stroke="#444" stroke-width="1" stroke-linecap="round" stroke-linejoin="round"/>
<g transform="translate(12,193)"><rect x="0.5" y="0.5" width="14" height="13" fill="#fff" stroke="#9a9a9a" stroke-width="1"/><rect x="0" y="0" width="15" height="3.2" fill="#1a73d9"/><g fill="#8d8d8d"><rect x="2" y="5" width="3" height="1.4"/><rect x="6" y="5" width="7" height="1.4"/><rect x="2" y="7.6" width="3" height="1.4"/><rect x="6" y="7.6" width="7" height="1.4"/><rect x="2" y="10.2" width="3" height="1.4"/><rect x="6" y="10.2" width="4" height="1.4"/></g>
    <g transform="translate(14,14.5)"><circle r="4.6" fill="#fff"/><g fill="#1a73d9"><circle r="3.1"/><g id="gt"><rect x="-1" y="-4.7" width="2" height="9.4"/><rect x="-4.7" y="-1" width="9.4" height="2"/></g><g transform="rotate(45)"><rect x="-1" y="-4.7" width="2" height="9.4"/><rect x="-4.7" y="-1" width="9.4" height="2"/></g></g><circle r="1.3" fill="#fff"/></g></g>
<g fill="none" stroke="#222" stroke-width="1" stroke-linejoin="round" stroke-linecap="round"><path d="M445.6 197.2 l3.8 3.8 l-1.3 0.6 l-2 2 l-0.3 2.6 l-1 1 l-5-5 l1-1 l2.6-0.3 l2-2z M441.8 204.6 l-2.6 2.6"/></g>
<path d="M460.5 197.5 l9 9 M469.5 197.5 l-9 9" stroke="#222" stroke-width="1.1" fill="none" stroke-linecap="round"/>
<path d="M15 238 L30.8 253.4 M30.8 238 L15 253.4" stroke="#ea3c42" stroke-width="4.6" stroke-linecap="round" fill="none"/>
<g transform="translate(45.2,231) scale(1.05,0.97)"><path d="M0.4 0.6 h23.6 v2.2 l-9.4 10 v10.8 l-3.6 4 v-14.8 L0.4 2.8z" fill="#3b3b3b"/><rect x="17.6" y="15.6" width="13" height="13.8" fill="#fff" stroke="#3b3b3b" stroke-width="1.8"/><path d="M20.4 21.6 l3.8 4 l6.6-8.4" fill="none" stroke="#2ea44f" stroke-width="2.8"/></g>
<path d="M85.50 243.50 L89.50 247.70 L93.50 243.50" fill="none" stroke="#444" stroke-width="1" stroke-linecap="round" stroke-linejoin="round"/>
<g><rect x="114.6" y="236.5" width="20.8" height="20.8" rx="1" fill="none" stroke="#3b3b3b" stroke-width="3.2"/><rect x="119" y="235" width="8.8" height="7.6" fill="#3b3b3b"/><rect x="121" y="236.6" width="2.2" height="4.4" fill="#f6f6f6"/><rect x="116" y="245.1" width="14.6" height="3.6" fill="#3b3b3b"/><rect x="130" y="245.1" width="3.4" height="11" fill="#3b3b3b"/><circle cx="136" cy="238.1" r="7.1" fill="#3fa45a"/><rect x="130.9" y="237.2" width="2" height="1.9" fill="#fff"/><rect x="135" y="237.2" width="2" height="1.9" fill="#fff"/><rect x="139.1" y="237.2" width="2" height="1.9" fill="#fff"/></g>
<g fill="none" stroke="#555" stroke-width="1.3" stroke-linecap="round"><circle cx="21.6" cy="283" r="4.9"/><path d="M25.2 286.8 l4 4"/></g>
<path d="M23.50 318.00 L27.50 314.00 L31.50 318.00" fill="none" stroke="#555" stroke-width="1" stroke-linecap="round" stroke-linejoin="round"/>
<path d="M23.50 754.40 L27.50 758.40 L31.50 754.40" fill="none" stroke="#555" stroke-width="1" stroke-linecap="round" stroke-linejoin="round"/>
<path d="M23.50 786.40 L27.50 790.40 L31.50 786.40" fill="none" stroke="#555" stroke-width="1" stroke-linecap="round" stroke-linejoin="round"/>
<path d="M23.50 818.40 L27.50 822.40 L31.50 818.40" fill="none" stroke="#555" stroke-width="1" stroke-linecap="round" stroke-linejoin="round"/>
<path d="M23.50 850.40 L27.50 854.40 L31.50 850.40" fill="none" stroke="#555" stroke-width="1" stroke-linecap="round" stroke-linejoin="round"/>
<path d="M23.50 882.40 L27.50 886.40 L31.50 882.40" fill="none" stroke="#555" stroke-width="1" stroke-linecap="round" stroke-linejoin="round"/>
<path d="M23.50 914.40 L27.50 918.40 L31.50 914.40" fill="none" stroke="#555" stroke-width="1" stroke-linecap="round" stroke-linejoin="round"/>
<path d="M83.0 551.0 l3 3 l5.6-6" fill="none" stroke="#fff" stroke-width="1.1" stroke-linecap="round" stroke-linejoin="round"/>
<path d="M284.8 551.0 l3 3 l5.6-6" fill="none" stroke="#fff" stroke-width="1.1" stroke-linecap="round" stroke-linejoin="round"/>
<defs><linearGradient id="lb" x1="0" x2="1" y1="0" y2="0"><stop offset="0" stop-color="#a9e6fb"/><stop offset="1" stop-color="#e9f9ff"/></linearGradient>
    <linearGradient id="lbv" x1="0" x2="0" y1="0" y2="1"><stop offset="0" stop-color="#e9f9ff"/><stop offset="1" stop-color="#a9e6fb"/></linearGradient>
    <marker id="ah" viewBox="0 0 10 10" refX="9" refY="5" markerWidth="7" markerHeight="7" orient="auto-start-reverse"><path d="M0 1.5 L10 5 L0 8.5z" fill="#000"/></marker></defs>
    <g stroke="#000" stroke-width="1" fill="url(#lb)">
      <path d="M133 441.3 L260.4 368 L260.4 403.7 L269 403.7 L137 478.6 L135.6 476.7z"/>
      <path d="M135.6 446 L260.4 372.5 M135.6 471.6 L260.4 398.6" fill="none"/>
      <rect x="260.4" y="367.8" width="72.2" height="35.9"/>
      <path d="M260.4 372.5 H332.6 M260.4 398.6 H332.6" fill="none"/>
      <rect x="64.5" y="441.3" width="71.1" height="35.4"/>
      <path d="M64.5 446 H135.6 M64.5 471.6 H135.6" fill="none"/>
    </g>
    <g stroke="#000" stroke-width="1" fill="none">
      <path d="M111.8 368.3 H260.4" stroke-dasharray="4 2.6"/>
      <path d="M56 441.3 H63" stroke-dasharray="3 2"/>
      <path d="M116 371 V438.6" marker-start="url(#ah)" marker-end="url(#ah)"/>
      <path d="M67 486.3 H133" marker-start="url(#ah)" marker-end="url(#ah)"/>
      <path d="M263 412.7 H330" marker-start="url(#ah)" marker-end="url(#ah)"/>
      <path d="M64.5 482 V490 M135.6 482 V490 M260.4 408 V416 M332.6 408 V416" stroke-dasharray="2.4 1.6"/>
      <path d="M58 427 H73.2 L65.6 440.6z" fill="#ecf7b4"/>
    </g>
<g stroke="#000" stroke-width="1.1"><rect x="70.2" y="603.4" width="138.7" height="20.8" fill="url(#lbv)"/><rect x="72.5" y="662.3" width="139.2" height="20.1" fill="url(#lbv)"/><rect x="86.6" y="623.8" width="20.4" height="38.5" fill="#f79646" stroke-width="1.5"/><rect x="109.8" y="623.8" width="19.6" height="38.5" fill="#f79646" stroke-width="1.5"/><rect x="131.6" y="623.8" width="19.3" height="38.5" fill="#f79646" stroke-width="1.5"/><rect x="153.7" y="623.8" width="19.5" height="38.5" fill="#f79646" stroke-width="1.5"/><rect x="175.8" y="623.8" width="20.1" height="38.5" fill="#f79646" stroke-width="1.5"/><path d="M64 613.9 H208.9 M64 671.3 H211.7" fill="none" stroke-dasharray="4 2.6" stroke-width="1"/><path d="M62.8 616.6 V669" fill="none" stroke-width="1" marker-start="url(#ah)" marker-end="url(#ah)"/></g>
<g><rect x="22.6" y="955.4" width="5.6" height="3.4" rx=".6" fill="#e8913a"/><rect x="29.6" y="961.4" width="6.6" height="3.6" rx=".6" fill="#e8913a"/><rect x="29.6" y="967.6" width="6.6" height="3.6" rx=".6" fill="#e8913a"/><path d="M25 959.4 V969.4 H29 M25 963.2 H29" fill="none" stroke="#555" stroke-width="1.1"/></g>
<g transform="translate(120,955.2) scale(1.02)"><rect x="0.5" y="0.5" width="14" height="12.6" fill="#fff" stroke="#9a9a9a" stroke-width="1"/><rect x="0" y="0" width="15" height="3.2" fill="#1a73d9"/><g fill="#8d8d8d"><rect x="2" y="5" width="3" height="1.4"/><rect x="6" y="5" width="7" height="1.4"/><rect x="2" y="7.6" width="3" height="1.4"/><rect x="6" y="7.6" width="7" height="1.4"/><rect x="2" y="10.2" width="3" height="1.4"/><rect x="6" y="10.2" width="4" height="1.4"/></g>
    <g transform="translate(14,14)"><circle r="4.6" fill="#fff"/><g fill="#1a73d9"><circle r="3.1"/><rect x="-1" y="-4.7" width="2" height="9.4"/><rect x="-4.7" y="-1" width="9.4" height="2"/><g transform="rotate(45)"><rect x="-1" y="-4.7" width="2" height="9.4"/><rect x="-4.7" y="-1" width="9.4" height="2"/></g></g><circle r="1.3" fill="#fff"/></g></g>
<circle cx="222.8" cy="963.9" r="8.6" fill="#e8393f"/><rect x="221.5" y="958" width="2.7" height="7.6" rx="1.2" fill="#fff"/><circle cx="222.85" cy="968.6" r="1.5" fill="#fff"/>
<g fill="none" stroke="#555" stroke-width=".9" stroke-linejoin="round"><path d="M518.6 196 l4.1-2.6 l4 2.2 v6.6 l-4.1 2.6 l-4-2.2z M518.6 196 l4 2.2 l4.1-2.6 M522.6 198.2 v6.6" stroke="#777"/><path d="M514 189.8 L518.4 198.6"/><path d="M514 189.8 L509.6 198.4 l1.6 0.5 L514.2 193z" fill="#555" stroke="#555" stroke-width=".6"/><circle cx="516" cy="201.6" r="4.7" stroke="#4a4a4a" stroke-width="1"/><path d="M511.6 200 a4.7 4.7 0 0 0 7.4 5.6" stroke="#444" stroke-width="1.4"/></g>
<g fill="none" stroke="#777" stroke-width=".9" stroke-linecap="round"><path d="M602 194.6 l2.6 2.6 l-1 0.4 l-1.4 1.4 l-0.2 1.8 l-0.6 0.6 l-3.4-3.4 l0.6-0.6 l1.8-0.2 l1.4-1.4z M598.6 199.4 l-2 2 M596.4 194.8 l6.6 6.6"/></g>
<path d="M611.4 193.4 l9 9 M620.4 193.4 l-9 9" stroke="#555" stroke-width="1" fill="none" stroke-linecap="round"/></svg>
<div class="b" style="left:1086px;top:150.5px;width:215px;height:148px;background:#f9f9f9;border:1px solid #e6e6e6;border-radius:8px;box-sizing:border-box;box-shadow:0 2px 6px rgba(0,0,0,.12);"></div>
<div class="b" style="left:1087px;top:277px;width:213px;height:1px;background:#e4e4e4;"></div>
<div class="t" style="left:1114.75px;top:260.10px;font-size:12px;line-height:12px;color:#1b1b1b;letter-spacing:0.102px;">Korkuluk</div>
<div class="t" style="left:1221.85px;top:260.10px;font-size:12px;line-height:12px;color:#1b1b1b;letter-spacing:0.093px;">Merdiven</div>
<div class="b" style="left:1086.2px;top:79px;width:107.6px;height:62.7px;border:3px solid #fe0000;box-sizing:border-box;border-radius:1px;"></div>
<div class="b" style="left:1191.3px;top:156.3px;width:111.4px;height:121.4px;border:3px solid #fe0000;box-sizing:border-box;border-radius:1px;"></div>
<svg class="b" style="left:0;top:0;pointer-events:none" width="1812" height="989" viewBox="0 0 1812 989"><g fill="#c9c9c9"><rect x="1295" y="290" width="1.2" height="1.2"/><rect x="1297.4" y="290" width="1.2" height="1.2"/><rect x="1297.4" y="287.6" width="1.2" height="1.2"/><rect x="1292.6" y="292.4" width="1.2" height="1.2"/><rect x="1295" y="292.4" width="1.2" height="1.2"/><rect x="1297.4" y="292.4" width="1.2" height="1.2"/></g>
<g transform="translate(1103,153.5)">
      <path d="M1.2 75 L70.4 44.9 V52.7 L1.2 81.9z" fill="#9fb0c6"/>
      <g fill="none" stroke="#8fa3bb" stroke-width="3" stroke-linecap="round" stroke-linejoin="round"><path d="M11.5 84 V28 M28.7 76.4 V21 M45.3 69 V13.4 M62.2 61.3 V6.2"/><path d="M6.6 56.6 C3 58 1.7 56 1.7 52.6 V39 C1.7 34 3.6 30.4 7.4 28.8 L65 2.4 C69.6 0.4 72.5 2 72.5 6.4 V22.4 C72.5 26.6 71 29 67.4 30.6 L6.6 56.6z"/></g>
      <g fill="none" stroke="#c5d1e0" stroke-width="0.9" stroke-linecap="round"><path d="M10.9 84 V29 M28.1 76.4 V22 M44.7 69 V14.4 M61.6 61.3 V7.2"/></g>
      <path d="M0.3 87 L73.4 56.1 L74.2 59.5 L3.7 89.6z" fill="#fbb52e"/>
      <path d="M3.7 89.6 L74.2 59.5 V69 L3.7 98.2z" fill="#f6a821"/>
      <path d="M0.3 96.5 L3.7 98.2 L74.2 69 V71.6 L3.7 100.8 L0.3 99z" fill="#fbb52e"/>
      <path d="M0.3 87 L3.7 89.6 V92 L0.3 89.6z M0.3 96.5 L3.7 98.2 V100.8 L0.3 99z" fill="#e2941a"/>
      <path d="M5 91.4 L74.2 62 M5 96.4 L74.2 67.2" stroke="#fcc85c" stroke-width=".7" stroke-dasharray="1.4 1" fill="none"/>
    </g>
<g><polygon points="1236.8,176.5 1257.0,168.3 1296.8,186.6 1277.2,195.4" fill="#d3d5d7"/><polygon points="1217.2,211.2 1236.8,176.5 1277.2,195.4 1258.2,228.9" fill="#c6c8ca"/><polygon points="1197.6,220.1 1217.2,211.2 1258.2,228.9 1237.4,239.0" fill="#cbcdcf"/><line x1="1234.8" y1="180.0" x2="1275.3" y2="198.8" stroke="#737d88" stroke-width="1.3"/><line x1="1234.2" y1="181.5" x2="1274.7" y2="200.3" stroke="#e8eaec" stroke-width="1"/><line x1="1231.1" y1="186.6" x2="1271.7" y2="205.2" stroke="#737d88" stroke-width="1.3"/><line x1="1230.5" y1="188.1" x2="1271.1" y2="206.7" stroke="#e8eaec" stroke-width="1"/><line x1="1227.4" y1="193.2" x2="1268.1" y2="211.5" stroke="#737d88" stroke-width="1.3"/><line x1="1226.8" y1="194.7" x2="1267.5" y2="213.0" stroke="#e8eaec" stroke-width="1"/><line x1="1223.6" y1="199.8" x2="1264.5" y2="217.9" stroke="#737d88" stroke-width="1.3"/><line x1="1223.0" y1="201.3" x2="1263.9" y2="219.4" stroke="#e8eaec" stroke-width="1"/><line x1="1219.9" y1="206.4" x2="1260.9" y2="224.2" stroke="#737d88" stroke-width="1.3"/><line x1="1219.3" y1="207.9" x2="1260.3" y2="225.7" stroke="#e8eaec" stroke-width="1"/><line x1="1218.2" y1="212.2" x2="1258.2" y2="228.9" stroke="#f4f5f6" stroke-width="1.2"/><polyline points="1197.6,220.1 1217.2,211.2 1236.8,176.5 1257.0,168.3" fill="none" stroke="#f5a826" stroke-width="3" stroke-linejoin="round"/><polyline points="1197.6,221.7 1217.2,212.8 1236.8,178.1 1257.0,169.9" fill="none" stroke="#d99220" stroke-width=".8" stroke-dasharray="1 .8"/><polyline points="1296.8,186.6 1277.2,195.4 1258.2,228.9 1237.4,239.0" fill="none" stroke="#f5a826" stroke-width="4.2" stroke-linejoin="round"/><polyline points="1297.2,187.2 1277.6,196.0 1258.6,229.5 1237.8,239.6" fill="none" stroke="#c98a1c" stroke-width="1.6" stroke-dasharray="1 1"/></g>
<g><path d="M1212.8 268.6 L1187 326" stroke="#fe0000" stroke-width="2.5" fill="none" stroke-linecap="round"/><path d="M1181.8 337.8 L1182.8 323.4 L1191.8 327.2z" fill="#fe0000"/></g></svg>
</div></body></html>
